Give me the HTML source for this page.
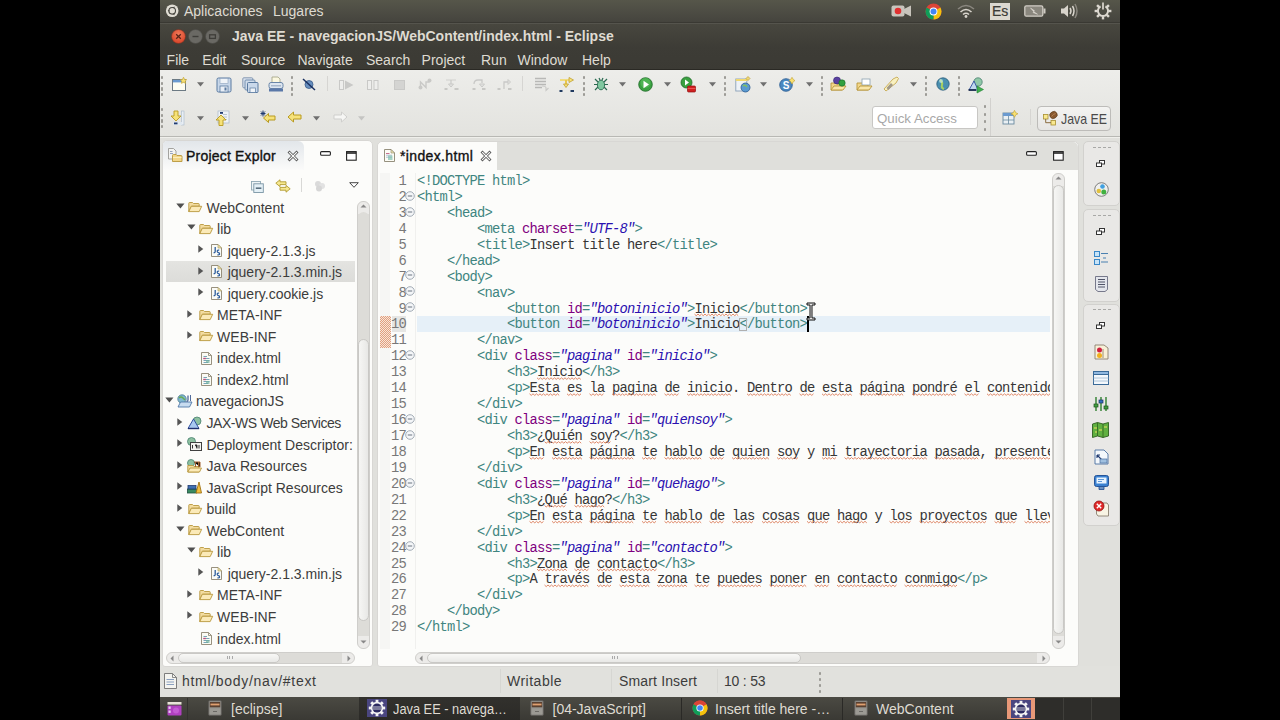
<!DOCTYPE html><html><head><meta charset="utf-8"><title>Eclipse</title><style>
*{margin:0;padding:0;box-sizing:border-box}
html,body{width:1280px;height:720px;overflow:hidden;background:#000}
body{position:relative;font-family:"Liberation Sans",sans-serif}
.a{position:absolute}
.t{position:absolute;white-space:nowrap;line-height:1}
svg{position:absolute;overflow:visible}
.code{position:absolute;left:417px;font-family:"Liberation Mono",monospace;font-size:13.8px;letter-spacing:-0.78px;line-height:15.9375px;white-space:pre;color:#363636}
.ln{position:absolute;font-family:"Liberation Mono",monospace;font-size:13.8px;letter-spacing:-0.78px;line-height:15.9375px;white-space:pre;color:#787878;text-align:right;width:40px;left:366px}
.tg{color:#3f8580}.an{color:#7f007f}.av{color:#2a10b0;font-style:italic}
.sq{}
.tr{position:absolute;white-space:nowrap;font-size:14px;line-height:21px;color:#3c3c3c}
</style></head><body>
<div class="a" style="left:160px;top:0;width:960px;height:720px;background:#e1e1dd"></div>
<div class="a" style="left:160px;top:0;width:960px;height:22px;background:linear-gradient(#56564a,#45443e)"></div>
<div class="a" style="left:160px;top:22px;width:960px;height:1px;background:#3a3933"></div><div class="a" style="left:160px;top:23px;width:960px;height:1px;background:#55544d"></div>
<div class="t" style="left:184px;top:4px;font-size:14px;color:#dfdbd2">Aplicaciones</div>
<div class="t" style="left:273px;top:4px;font-size:14px;color:#dfdbd2">Lugares</div>
<svg style="left:165px;top:4px" width="14" height="14" viewBox="0 0 14 14"><circle cx="7.2" cy="6.8" r="6.3" fill="#e0ddd4"/><circle cx="7.2" cy="6.8" r="3.3" fill="none" stroke="#45443e" stroke-width="1.1"/><path d="M2.6 6.8L4.4 5.8V7.8Z M9.6 2.4L9.3 4.5L7.7 3.4Z M9.6 11.2L7.7 10.2L9.3 9.1Z" fill="#45443e"/></svg>
<div class="a" style="left:160px;top:24px;width:960px;height:46px;background:linear-gradient(#48473f,#3d3c36 50%,#3b3a34)"></div>
<svg style="left:171px;top:29px" width="15" height="15"><defs><radialGradient id="rc" cx="0.5" cy="0.35" r="0.6"><stop offset="0" stop-color="#f07a5a"/><stop offset="1" stop-color="#d9472b"/></radialGradient></defs><circle cx="7.5" cy="7.5" r="7" fill="url(#rc)" stroke="#6e3024" stroke-width="0.6"/><path d="M5.2 5.2L9.8 9.8M9.8 5.2L5.2 9.8" stroke="#5a2418" stroke-width="1.3"/></svg>
<svg style="left:188px;top:29px" width="15" height="15"><circle cx="7.5" cy="7.5" r="7" fill="#6a6964" stroke="#4a4945" stroke-width="0.6"/><path d="M4.5 7.5H10.5" stroke="#3e3d39" stroke-width="1.4"/></svg>
<svg style="left:205px;top:29px" width="15" height="15"><circle cx="7.5" cy="7.5" r="7" fill="#6a6964" stroke="#4a4945" stroke-width="0.6"/><rect x="4.6" y="5.8" width="5.8" height="3.6" fill="none" stroke="#3e3d39" stroke-width="1.3"/></svg>
<div class="t" style="left:232px;top:29px;font-size:14px;font-weight:bold;color:#dfdbd2">Java EE - navegacionJS/WebContent/index.html - Eclipse</div>
<div class="t" style="left:166.6px;top:53px;font-size:14px;color:#dfdbd2">File</div>
<div class="t" style="left:202.3px;top:53px;font-size:14px;color:#dfdbd2">Edit</div>
<div class="t" style="left:241.0px;top:53px;font-size:14px;color:#dfdbd2">Source</div>
<div class="t" style="left:297.5px;top:53px;font-size:14px;color:#dfdbd2">Navigate</div>
<div class="t" style="left:366.0px;top:53px;font-size:14px;color:#dfdbd2">Search</div>
<div class="t" style="left:421.6px;top:53px;font-size:14px;color:#dfdbd2">Project</div>
<div class="t" style="left:481.0px;top:53px;font-size:14px;color:#dfdbd2">Run</div>
<div class="t" style="left:517.5px;top:53px;font-size:14px;color:#dfdbd2">Window</div>
<div class="t" style="left:582.0px;top:53px;font-size:14px;color:#dfdbd2">Help</div>
<div class="a" style="left:160px;top:69px;width:960px;height:1px;background:#2a2924"></div>
<div class="a" style="left:160px;top:70px;width:960px;height:66px;background:linear-gradient(#ededea,#e3e3df)"></div>
<div class="a" style="left:160px;top:136px;width:960px;height:1px;background:#b8b8b4"></div><div class="a" style="left:160px;top:137px;width:960px;height:1px;background:#efefeb"></div>
<div class="a" style="left:161px;top:76.0px;width:1.7px;height:3.4px;background:#9c9b96;border-radius:0.8px"></div>
<div class="a" style="left:161px;top:81.7px;width:1.7px;height:3.4px;background:#9c9b96;border-radius:0.8px"></div>
<div class="a" style="left:161px;top:87.4px;width:1.7px;height:3.4px;background:#9c9b96;border-radius:0.8px"></div>
<div class="a" style="left:161px;top:93.1px;width:1.7px;height:3.4px;background:#9c9b96;border-radius:0.8px"></div>
<div class="a" style="left:161px;top:108.0px;width:1.7px;height:3.4px;background:#9c9b96;border-radius:0.8px"></div>
<div class="a" style="left:161px;top:113.7px;width:1.7px;height:3.4px;background:#9c9b96;border-radius:0.8px"></div>
<div class="a" style="left:161px;top:119.4px;width:1.7px;height:3.4px;background:#9c9b96;border-radius:0.8px"></div>
<div class="a" style="left:161px;top:125.1px;width:1.7px;height:3.4px;background:#9c9b96;border-radius:0.8px"></div>
<svg style="left:171px;top:77px" width="16" height="15" viewBox="0 0 16 15"><rect x="1.5" y="2.5" width="13" height="11" fill="#fdfdf2" stroke="#6c7a84" stroke-width="1"/><rect x="2" y="3" width="12" height="2.4" fill="#6a9ad0"/><path d="M12.5 0.2L13.6 2.4L15.8 2.6L14.2 4.2L14.6 6.4L12.5 5.3L10.4 6.4L10.8 4.2L9.2 2.6L11.4 2.4Z" fill="#f8e070" stroke="#c0a030" stroke-width="0.6"/></svg>
<svg style="left:197px;top:82px" width="7" height="5" viewBox="0 0 7 5"><path d="M0 0.2H7L3.5 4.6Z" fill="#6f6f6f"/></svg>
<svg style="left:216px;top:77px" width="16" height="16" viewBox="0 0 16 16"><rect x="1" y="1" width="14" height="14" rx="1.5" fill="#c9d8ea" stroke="#5a7aa0" stroke-width="1"/><rect x="4" y="1.5" width="8" height="5" fill="#f0f4f8" stroke="#8aa0bc" stroke-width="0.6"/><rect x="4" y="9" width="8" height="6" fill="#e8eef6" stroke="#5a7aa0" stroke-width="0.8"/><rect x="8.5" y="10.5" width="2" height="3" fill="#5a7aa0"/></svg>
<svg style="left:242px;top:77px" width="17" height="16" viewBox="0 0 17 16"><rect x="0.8" y="0.8" width="10" height="10" rx="1" fill="#d8e2ee" stroke="#7a90ac" stroke-width="0.9"/><rect x="3" y="3" width="10" height="10" rx="1" fill="#d0dcea" stroke="#6a86a8" stroke-width="0.9"/><rect x="5.5" y="5.5" width="10.5" height="10" rx="1" fill="#c9d8ea" stroke="#5a7aa0" stroke-width="1"/><rect x="8" y="11" width="5.5" height="4.5" fill="#f0f4f8" stroke="#5a7aa0" stroke-width="0.7"/></svg>
<svg style="left:268px;top:76px" width="16" height="17" viewBox="0 0 16 17"><path d="M4 1H10L12 3V7H4Z" fill="#fbf8e0" stroke="#a0a080" stroke-width="0.8"/><rect x="1" y="6.5" width="14" height="6" rx="2" fill="#dde6f0" stroke="#6a86a8" stroke-width="1"/><rect x="1" y="12.5" width="14" height="3" fill="#5a78a8"/><rect x="3" y="9" width="10" height="1.5" fill="#a8b8cc"/></svg>
<div class="a" style="left:291px;top:76.0px;width:1.7px;height:3.4px;background:#9c9b96;border-radius:0.8px"></div>
<div class="a" style="left:291px;top:81.7px;width:1.7px;height:3.4px;background:#9c9b96;border-radius:0.8px"></div>
<div class="a" style="left:291px;top:87.4px;width:1.7px;height:3.4px;background:#9c9b96;border-radius:0.8px"></div>
<div class="a" style="left:291px;top:93.1px;width:1.7px;height:3.4px;background:#9c9b96;border-radius:0.8px"></div>
<svg style="left:302px;top:78px" width="14" height="13" viewBox="0 0 14 13"><circle cx="7" cy="6.5" r="4" fill="#6890c0" stroke="#3a5a88" stroke-width="0.8"/><path d="M1 1L13 12" stroke="#1a3060" stroke-width="1.5"/></svg>
<div class="a" style="left:327px;top:76px;width:1px;height:15px;background:#d6d5d2"></div>
<svg style="left:339px;top:80px" width="15" height="10" viewBox="0 0 15 10"><rect x="0.5" y="0.5" width="4" height="9" fill="#eeeeec" stroke="#c9c9c7" stroke-width="1"/><path d="M6 0.5L14.5 5L6 9.5Z" fill="#c9c9c7"/></svg>
<svg style="left:367px;top:80px" width="12" height="10" viewBox="0 0 12 10"><rect x="0.5" y="0.5" width="4" height="9" fill="#eeeeec" stroke="#c9c9c7" stroke-width="1"/><rect x="7" y="0.5" width="4" height="9" fill="#eeeeec" stroke="#c9c9c7" stroke-width="1"/></svg>
<svg style="left:394px;top:80px" width="11" height="10" viewBox="0 0 11 10"><rect x="0.5" y="0.5" width="10" height="9" fill="#d4d4d2" stroke="#c9c9c7" stroke-width="1"/></svg>
<svg style="left:418px;top:78px" width="14" height="12" viewBox="0 0 14 12"><circle cx="2.5" cy="9.5" r="2" fill="#c9c9c7"/><circle cx="11.5" cy="2.5" r="2" fill="#c9c9c7"/><path d="M2.5 9.5V4L8 9.5V4H11.5" stroke="#c9c9c7" stroke-width="1.4" fill="none"/></svg>
<svg style="left:444px;top:79px" width="15" height="11" viewBox="0 0 15 11"><path d="M2 1H12" stroke="#d8d8d6" stroke-width="1.4"/><path d="M7 1V5" stroke="#c9c9c7" stroke-width="1.2"/><path d="M4.5 5H9.5L7 8Z" fill="#e4e4e2" stroke="#c9c9c7" stroke-width="1"/><path d="M0.5 10H3.5M10.5 10H14.5" stroke="#bdbdbb" stroke-width="1.6"/></svg>
<svg style="left:471px;top:79px" width="15" height="11" viewBox="0 0 15 11"><path d="M3 5Q3 1 7 1H11V4" stroke="#c9c9c7" stroke-width="1.3" fill="none"/><path d="M8.5 5H13.5L11 8Z" fill="#e4e4e2" stroke="#c9c9c7" stroke-width="1"/><path d="M1.5 10H4.5M11 10H14.5" stroke="#bdbdbb" stroke-width="1.6"/></svg>
<svg style="left:497px;top:79px" width="15" height="11" viewBox="0 0 15 11"><path d="M7 10V3H11" stroke="#c9c9c7" stroke-width="1.3" fill="none"/><path d="M11 0.5L13.5 3L11 5.5Z" fill="#e4e4e2" stroke="#c9c9c7" stroke-width="1"/><path d="M0.5 10H3.5M11 10H14.5" stroke="#bdbdbb" stroke-width="1.6"/></svg>
<div class="a" style="left:522px;top:76px;width:1px;height:15px;background:#d6d5d2"></div>
<svg style="left:534px;top:77px" width="15" height="15" viewBox="0 0 15 15"><path d="M1 1.5H12M1 4.5H12M1 7.5H12M1 10.5H8" stroke="#b8b8b6" stroke-width="1.6"/><path d="M8 9Q12 9 12 11V13.5L14.5 11" stroke="#c8c8c6" stroke-width="1.1" fill="none"/></svg>
<svg style="left:559px;top:77px" width="16" height="15" viewBox="0 0 16 15"><path d="M1 3H11" stroke="#f0dc80" stroke-width="2"/><path d="M10 0.5L14.5 3L10 5.5Z" fill="#f6e27a" stroke="#c0a030" stroke-width="0.8"/><path d="M7 3V7" stroke="#e8c850" stroke-width="2"/><path d="M4.5 7H9.5L7 10.5Z" fill="#f6e27a" stroke="#c0a030" stroke-width="0.8"/><path d="M0.5 14H3.5M11.5 14H15" stroke="#203a60" stroke-width="2"/></svg>
<div class="a" style="left:583px;top:76.0px;width:1.7px;height:3.4px;background:#9c9b96;border-radius:0.8px"></div>
<div class="a" style="left:583px;top:81.7px;width:1.7px;height:3.4px;background:#9c9b96;border-radius:0.8px"></div>
<div class="a" style="left:583px;top:87.4px;width:1.7px;height:3.4px;background:#9c9b96;border-radius:0.8px"></div>
<div class="a" style="left:583px;top:93.1px;width:1.7px;height:3.4px;background:#9c9b96;border-radius:0.8px"></div>
<svg style="left:593px;top:76px" width="16" height="16" viewBox="0 0 16 16"><path d="M2 3L5 6M14 3L11 6M1 8.5H4.5M15 8.5H11.5M2 14L5 11M14 14L11 11M6 2L7 4M10 2L9 4" stroke="#2a6a50" stroke-width="1.2"/><ellipse cx="8" cy="9" rx="3.6" ry="4.8" fill="#80c8a0" stroke="#2a6a50" stroke-width="0.9"/></svg>
<svg style="left:619px;top:82px" width="7" height="5" viewBox="0 0 7 5"><path d="M0 0.2H7L3.5 4.6Z" fill="#6f6f6f"/></svg>
<svg style="left:638px;top:77px" width="15" height="15" viewBox="0 0 15 15"><circle cx="7.5" cy="7.5" r="6.8" fill="#3aa040" stroke="#1e6a28" stroke-width="0.8"/><circle cx="7.5" cy="6" r="5" fill="#5cc060" opacity="0.6"/><path d="M5.5 3.8L11 7.5L5.5 11.2Z" fill="#fff"/></svg>
<svg style="left:664px;top:82px" width="7" height="5" viewBox="0 0 7 5"><path d="M0 0.2H7L3.5 4.6Z" fill="#6f6f6f"/></svg>
<svg style="left:680px;top:76px" width="16" height="17" viewBox="0 0 16 17"><circle cx="6.5" cy="6.5" r="5.5" fill="#3aa040" stroke="#1e6a28" stroke-width="0.8"/><path d="M5 3.5L9 6.5L5 9.5Z" fill="#fff"/><rect x="7.5" y="10" width="8" height="6" rx="1" fill="#d02020" stroke="#901010" stroke-width="0.7"/><path d="M7.5 12.5H15.5" stroke="#f06060" stroke-width="0.8"/></svg>
<svg style="left:709px;top:82px" width="7" height="5" viewBox="0 0 7 5"><path d="M0 0.2H7L3.5 4.6Z" fill="#6f6f6f"/></svg>
<div class="a" style="left:724px;top:76.0px;width:1.7px;height:3.4px;background:#9c9b96;border-radius:0.8px"></div>
<div class="a" style="left:724px;top:81.7px;width:1.7px;height:3.4px;background:#9c9b96;border-radius:0.8px"></div>
<div class="a" style="left:724px;top:87.4px;width:1.7px;height:3.4px;background:#9c9b96;border-radius:0.8px"></div>
<div class="a" style="left:724px;top:93.1px;width:1.7px;height:3.4px;background:#9c9b96;border-radius:0.8px"></div>
<svg style="left:735px;top:76px" width="16" height="17" viewBox="0 0 16 17"><rect x="0.8" y="3" width="11" height="12" fill="#eef2f6" stroke="#8aa0b8" stroke-width="0.9"/><path d="M0.8 4H12" stroke="#f0d870" stroke-width="2"/><circle cx="10.5" cy="11.5" r="4.5" fill="#5a9ad0" stroke="#2a5a90" stroke-width="0.8"/><path d="M8 10Q10 8 12 11" stroke="#80c060" stroke-width="1.5" fill="none"/><path d="M13 0.5L15 2.5L13 4.5L11 2.5Z" fill="#f0d870" stroke="#b09020" stroke-width="0.6"/></svg>
<svg style="left:760px;top:82px" width="7" height="5" viewBox="0 0 7 5"><path d="M0 0.2H7L3.5 4.6Z" fill="#6f6f6f"/></svg>
<svg style="left:779px;top:77px" width="16" height="15" viewBox="0 0 16 15"><circle cx="7" cy="8" r="6.3" fill="#4a88c0" stroke="#2a5a90" stroke-width="0.8"/><text x="7" y="12" font-family="Liberation Sans" font-weight="bold" font-size="10" fill="#fff" text-anchor="middle">S</text><path d="M13 0.3L14.4 2.6L16 3.6L14.4 4.6L13 7L11.6 4.6L10 3.6L11.6 2.6Z" fill="#f8e070" stroke="#c0a030" stroke-width="0.6"/></svg>
<svg style="left:806px;top:82px" width="7" height="5" viewBox="0 0 7 5"><path d="M0 0.2H7L3.5 4.6Z" fill="#6f6f6f"/></svg>
<div class="a" style="left:821px;top:76.0px;width:1.7px;height:3.4px;background:#9c9b96;border-radius:0.8px"></div>
<div class="a" style="left:821px;top:81.7px;width:1.7px;height:3.4px;background:#9c9b96;border-radius:0.8px"></div>
<div class="a" style="left:821px;top:87.4px;width:1.7px;height:3.4px;background:#9c9b96;border-radius:0.8px"></div>
<div class="a" style="left:821px;top:93.1px;width:1.7px;height:3.4px;background:#9c9b96;border-radius:0.8px"></div>
<svg style="left:830px;top:76px" width="17" height="16" viewBox="0 0 17 16"><path d="M1 14V7H6L7 8H12V14Z" fill="#f2d68a" stroke="#b8963a" stroke-width="0.9"/><path d="M1 14L4 10H16L13 14Z" fill="#fae6a8" stroke="#b8963a" stroke-width="0.9"/><circle cx="7" cy="4.5" r="3.5" fill="#5a40a0" stroke="#302070" stroke-width="0.6"/><circle cx="12" cy="7" r="3.2" fill="#30a040" stroke="#1a6a28" stroke-width="0.6"/></svg>
<svg style="left:856px;top:76px" width="17" height="16" viewBox="0 0 17 16"><path d="M1 14V7H6L7 8H12V14Z" fill="#f2d68a" stroke="#b8963a" stroke-width="0.9"/><rect x="6" y="3" width="8" height="6" fill="#fff" stroke="#8aa0b0" stroke-width="0.8"/><path d="M1 14L4 10H16L13 14Z" fill="#fae6a8" stroke="#b8963a" stroke-width="0.9"/></svg>
<svg style="left:883px;top:76px" width="17" height="16" viewBox="0 0 17 16"><path d="M3 15L1 13L10 3L14 1L15.5 2.5L13 7Z" fill="#f8f0c0" stroke="#c0a040" stroke-width="0.8"/><path d="M3.5 12L8 7L10 9L5.5 14Z" fill="#a09888"/></svg>
<svg style="left:910px;top:82px" width="7" height="5" viewBox="0 0 7 5"><path d="M0 0.2H7L3.5 4.6Z" fill="#6f6f6f"/></svg>
<div class="a" style="left:925px;top:76.0px;width:1.7px;height:3.4px;background:#9c9b96;border-radius:0.8px"></div>
<div class="a" style="left:925px;top:81.7px;width:1.7px;height:3.4px;background:#9c9b96;border-radius:0.8px"></div>
<div class="a" style="left:925px;top:87.4px;width:1.7px;height:3.4px;background:#9c9b96;border-radius:0.8px"></div>
<div class="a" style="left:925px;top:93.1px;width:1.7px;height:3.4px;background:#9c9b96;border-radius:0.8px"></div>
<svg style="left:936px;top:77px" width="14" height="14" viewBox="0 0 14 14"><circle cx="7" cy="7" r="6.2" fill="#4a90b0" stroke="#2a5a78" stroke-width="0.8"/><path d="M4 3Q7 5 6 8T8 12" stroke="#a8d060" stroke-width="2" fill="none"/><circle cx="5" cy="4" r="2" fill="#d0f0f0" opacity="0.6"/></svg>
<div class="a" style="left:958px;top:76.0px;width:1.7px;height:3.4px;background:#9c9b96;border-radius:0.8px"></div>
<div class="a" style="left:958px;top:81.7px;width:1.7px;height:3.4px;background:#9c9b96;border-radius:0.8px"></div>
<div class="a" style="left:958px;top:87.4px;width:1.7px;height:3.4px;background:#9c9b96;border-radius:0.8px"></div>
<div class="a" style="left:958px;top:93.1px;width:1.7px;height:3.4px;background:#9c9b96;border-radius:0.8px"></div>
<svg style="left:968px;top:77px" width="16" height="16" viewBox="0 0 16 16"><circle cx="10" cy="5" r="4.2" fill="#90c8a8" stroke="#4a8070" stroke-width="0.8"/><path d="M1 13L6 4L10 13Z" fill="#c0d8f0" stroke="#3050a0" stroke-width="0.9"/><path d="M0.5 13H8" stroke="#102040" stroke-width="1.6"/><path d="M9 9L15.5 12.5L9 16Z" fill="#40b050" stroke="#208030" stroke-width="0.6"/></svg>
<svg style="left:170px;top:110px" width="15" height="16" viewBox="0 0 15 16"><path d="M4 1H8V6H11L6 11L1 6H4Z" fill="#f6e27a" stroke="#b89a20" stroke-width="0.9"/><rect x="11.5" y="1" width="2.5" height="14" fill="#e8eef4" stroke="#a8b8c8" stroke-width="0.6"/><rect x="3" y="12" width="9" height="3" fill="#e0e8f0"/><rect x="4" y="12.5" width="3.5" height="1.8" fill="#203a70"/></svg>
<svg style="left:197px;top:116px" width="7" height="5" viewBox="0 0 7 5"><path d="M0 0.2H7L3.5 4.6Z" fill="#6f6f6f"/></svg>
<svg style="left:215px;top:110px" width="15" height="16" viewBox="0 0 15 16"><rect x="3" y="1" width="11" height="12" fill="#eef2f6" stroke="#a8b8c8" stroke-width="0.7"/><rect x="5" y="2" width="3" height="1.8" fill="#203a70"/><path d="M8 4.5H12M8 7H12M8 9.5H12" stroke="#a8b8c8" stroke-width="0.8"/><path d="M4 15.5V10H1L6 5L11 10H8V15.5Z" fill="#f6e27a" stroke="#b89a20" stroke-width="0.9"/></svg>
<svg style="left:242px;top:116px" width="7" height="5" viewBox="0 0 7 5"><path d="M0 0.2H7L3.5 4.6Z" fill="#6f6f6f"/></svg>
<svg style="left:260px;top:110px" width="17" height="15" viewBox="0 0 17 15"><path d="M1 1.5L5 5.5M3 0.5V6.5M0.5 3.5H5.5M1 5.5L5 1.5" stroke="#203a70" stroke-width="1"/><path d="M3.5 8L8.5 3.5V6H15V10H8.5V12.5Z" fill="#f6e27a" stroke="#b89a20" stroke-width="1"/></svg>
<svg style="left:287px;top:110px" width="15" height="14" viewBox="0 0 15 14"><path d="M1 7L6.5 2V5H14V9H6.5V12Z" fill="#f6e27a" stroke="#b89a20" stroke-width="1"/></svg>
<svg style="left:313px;top:116px" width="7" height="5" viewBox="0 0 7 5"><path d="M0 0.2H7L3.5 4.6Z" fill="#6f6f6f"/></svg>
<svg style="left:333px;top:110px" width="15" height="14" viewBox="0 0 15 14"><path d="M14 7L8.5 2V5H1V9H8.5V12Z" fill="#f6f6f4" stroke="#cfcfcd" stroke-width="1"/></svg>
<svg style="left:358px;top:116px" width="7" height="5" viewBox="0 0 7 5"><path d="M0 0.2H7L3.5 4.6Z" fill="#c4c4c2"/></svg>
<div class="a" style="left:872px;top:106px;width:106px;height:23px;background:#fff;border:1px solid #c8c7c4;border-radius:3px"></div>
<div class="t" style="left:877px;top:112px;font-size:13.3px;color:#a8a8a8">Quick Access</div>
<div class="a" style="left:984px;top:105.0px;width:1.7px;height:3.4px;background:#9c9b96;border-radius:0.8px"></div>
<div class="a" style="left:984px;top:112.5px;width:1.7px;height:3.4px;background:#9c9b96;border-radius:0.8px"></div>
<div class="a" style="left:984px;top:120.0px;width:1.7px;height:3.4px;background:#9c9b96;border-radius:0.8px"></div>
<div class="a" style="left:984px;top:127.5px;width:1.7px;height:3.4px;background:#9c9b96;border-radius:0.8px"></div>
<div class="a" style="left:990px;top:98px;width:1px;height:38px;background:#d2d1ce"></div>
<svg style="left:1002px;top:110px" width="16" height="16" viewBox="0 0 16 16"><rect x="1" y="3" width="11" height="11" fill="#eaf0f4" stroke="#6a8aa0" stroke-width="0.9"/><rect x="1" y="3" width="11" height="3" fill="#6a9ad0"/><path d="M6.5 6V14M1 10H12" stroke="#6a8aa0" stroke-width="0.8"/><path d="M12.5 0.3L13.8 2.8L16 3.8L13.8 4.8L12.5 7.3L11.2 4.8L9 3.8L11.2 2.8Z" fill="#f8e070" stroke="#c0a030" stroke-width="0.6"/></svg>
<div class="a" style="left:1030px;top:109px;width:1px;height:16px;background:#d6d5d2"></div>
<div class="a" style="left:1037px;top:106px;width:74px;height:25px;background:linear-gradient(#f4f4f2,#e6e5e3);border:1px solid #bdbcb9;border-radius:4px"></div>
<svg style="left:1043px;top:111px" width="15" height="15" viewBox="0 0 15 15"><rect x="0.5" y="3.5" width="4.5" height="4.5" fill="#f8e890" stroke="#a89030" stroke-width="0.8"/><rect x="8" y="9.5" width="4.5" height="4.5" fill="#f8e890" stroke="#a89030" stroke-width="0.8"/><path d="M2.7 8V11.7H8" stroke="#806030" stroke-width="0.9" fill="none"/><ellipse cx="10.5" cy="4" rx="3.8" ry="3.4" fill="#8a5a30" stroke="#5a3a18" stroke-width="0.6" transform="rotate(-30 10.5 4)"/><path d="M8.5 5.5Q10.5 3 12.5 2.5" stroke="#c09060" stroke-width="0.7" fill="none"/></svg>
<div class="t" style="left:1061px;top:112px;font-size:14.5px;color:#4a4a4a;transform:scaleX(0.85);transform-origin:0 0">Java EE</div>
<div class="a" style="left:160px;top:138px;width:960px;height:528px;background:#e0e0dc"></div>
<div class="a" style="left:162px;top:140px;width:211px;height:527px;background:#fcfcfa;border:1px solid #d8d7d4;border-radius:5px 5px 3px 3px"></div>
<div class="a" style="left:163px;top:141px;width:141px;height:29px;background:linear-gradient(#e2e6ea,#fbfbfa);border-radius:4px 6px 0 0"></div>
<div class="t" style="left:186px;top:149px;font-size:14px;letter-spacing:0.2px;color:#111;-webkit-text-stroke:0.35px #111">Project Explor</div>
<div class="a" style="left:377px;top:141px;width:702px;height:526px;background:#fcfcfa;border:1px solid #d8d7d4;border-radius:5px 5px 3px 3px"></div>
<div class="a" style="left:497px;top:142px;width:581px;height:28px;background:#dfdfdb;border-radius:0 5px 0 0"></div>
<div class="a" style="left:378px;top:142px;width:119px;height:28px;background:#fcfcfa;border-radius:5px 5px 0 0"></div>
<div class="a" style="left:380px;top:173px;width:10px;height:476px;background:#f6f6f4"></div>
<div class="a" style="left:415px;top:173px;width:1px;height:476px;background:#f0f0ee"></div>
<div class="t" style="left:400px;top:149px;font-size:14px;letter-spacing:0.35px;color:#111;-webkit-text-stroke:0.35px #111">*index.html</div>
<div class="a" style="left:417px;top:316px;width:633px;height:16px;background:#e6f0f8"></div>
<div class="a" style="left:392px;top:316px;width:14px;height:16px;background:#e6e6e4"></div>
<div class="a" style="left:380px;top:316px;width:11px;height:32px;background:repeating-conic-gradient(#e0a080 0 25%,#f8e4d8 0 50%) 0 0/2px 2px"></div>
<div class="a" style="left:417px;top:174px;width:633px;height:475px;overflow:hidden">
<div class="code" style="left:0;top:0px"><span class="tg">&lt;!DOCTYPE html&gt;</span>
<span class="tg">&lt;html&gt;</span>
    <span class="tg">&lt;head&gt;</span>
        <span class="tg">&lt;meta </span><span class="an">charset</span><span class="tg">=</span><span class="av">&quot;UTF-8&quot;</span><span class="tg">&gt;</span>
        <span class="tg">&lt;title&gt;</span>Insert title here<span class="tg">&lt;/title&gt;</span>
    <span class="tg">&lt;/head&gt;</span>
    <span class="tg">&lt;body&gt;</span>
        <span class="tg">&lt;nav&gt;</span>
            <span class="tg">&lt;button </span><span class="an">id</span><span class="tg">=</span><span class="av">&quot;botoninicio&quot;</span><span class="tg">&gt;</span><span class="sq">Inicio</span><span class="tg">&lt;/button&gt;</span>
            <span class="tg">&lt;button </span><span class="an">id</span><span class="tg">=</span><span class="av">&quot;botoninicio&quot;</span><span class="tg">&gt;</span>Inicio<span class="tg">&lt;/button&gt;</span>
        <span class="tg">&lt;/nav&gt;</span>
        <span class="tg">&lt;div </span><span class="an">class</span><span class="tg">=</span><span class="av">&quot;pagina&quot;</span> <span class="an">id</span><span class="tg">=</span><span class="av">&quot;inicio&quot;</span><span class="tg">&gt;</span>
            <span class="tg">&lt;h3&gt;</span><span class="sq">Inicio</span><span class="tg">&lt;/h3&gt;</span>
            <span class="tg">&lt;p&gt;</span><span class="sq">Esta</span> <span class="sq">es</span> <span class="sq">la</span> <span class="sq">pagina</span> <span class="sq">de</span> <span class="sq">inicio.</span> <span class="sq">Dentro</span> <span class="sq">de</span> <span class="sq">esta</span> <span class="sq">página</span> <span class="sq">pondré</span> <span class="sq">el</span> <span class="sq">contenido</span> <span class="sq">de</span> <span class="sq">mi</span> <span class="sq">pagina</span>
        <span class="tg">&lt;/div&gt;</span>
        <span class="tg">&lt;div </span><span class="an">class</span><span class="tg">=</span><span class="av">&quot;pagina&quot;</span> <span class="an">id</span><span class="tg">=</span><span class="av">&quot;quiensoy&quot;</span><span class="tg">&gt;</span>
            <span class="tg">&lt;h3&gt;</span><span class="sq">¿Quién</span> <span class="sq">soy?</span><span class="tg">&lt;/h3&gt;</span>
            <span class="tg">&lt;p&gt;</span><span class="sq">En</span> <span class="sq">esta</span> <span class="sq">página</span> <span class="sq">te</span> <span class="sq">hablo</span> <span class="sq">de</span> <span class="sq">quien</span> <span class="sq">soy</span> <span class="sq">y</span> <span class="sq">mi</span> <span class="sq">trayectoria</span> <span class="sq">pasada,</span> <span class="sq">presente</span> <span class="sq">y</span> <span class="sq">futura</span>
        <span class="tg">&lt;/div&gt;</span>
        <span class="tg">&lt;div </span><span class="an">class</span><span class="tg">=</span><span class="av">&quot;pagina&quot;</span> <span class="an">id</span><span class="tg">=</span><span class="av">&quot;quehago&quot;</span><span class="tg">&gt;</span>
            <span class="tg">&lt;h3&gt;</span><span class="sq">¿Qué</span> <span class="sq">hago?</span><span class="tg">&lt;/h3&gt;</span>
            <span class="tg">&lt;p&gt;</span><span class="sq">En</span> <span class="sq">esta</span> <span class="sq">página</span> <span class="sq">te</span> <span class="sq">hablo</span> <span class="sq">de</span> <span class="sq">las</span> <span class="sq">cosas</span> <span class="sq">que</span> <span class="sq">hago</span> <span class="sq">y</span> <span class="sq">los</span> <span class="sq">proyectos</span> <span class="sq">que</span> <span class="sq">llevo</span>
        <span class="tg">&lt;/div&gt;</span>
        <span class="tg">&lt;div </span><span class="an">class</span><span class="tg">=</span><span class="av">&quot;pagina&quot;</span> <span class="an">id</span><span class="tg">=</span><span class="av">&quot;contacto&quot;</span><span class="tg">&gt;</span>
            <span class="tg">&lt;h3&gt;</span><span class="sq">Zona</span> <span class="sq">de</span> <span class="sq">contacto</span><span class="tg">&lt;/h3&gt;</span>
            <span class="tg">&lt;p&gt;</span>A <span class="sq">través</span> <span class="sq">de</span> <span class="sq">esta</span> <span class="sq">zona</span> <span class="sq">te</span> <span class="sq">puedes</span> <span class="sq">poner</span> <span class="sq">en</span> <span class="sq">contacto</span> <span class="sq">conmigo</span><span class="tg">&lt;/p&gt;</span>
        <span class="tg">&lt;/div&gt;</span>
    <span class="tg">&lt;/body&gt;</span>
<span class="tg">&lt;/html&gt;</span></div>
<svg style="left:0;top:0" width="633" height="475"><polyline points="277.5,140.1 279.2,141.7 281.0,140.1 282.8,141.7 284.5,140.1 286.2,141.7 288.0,140.1 289.8,141.7 291.5,140.1 293.2,141.7 295.0,140.1 296.8,141.7 298.5,140.1 300.2,141.7 302.0,140.1 303.8,141.7 305.5,140.1 307.2,141.7 309.0,140.1 310.8,141.7 312.5,140.1 314.2,141.7 316.0,140.1 317.8,141.7 319.5,140.1 321.2,141.7" fill="none" stroke="#e08868" stroke-width="1"/><polyline points="120.0,203.8 121.8,205.4 123.5,203.8 125.2,205.4 127.0,203.8 128.8,205.4 130.5,203.8 132.2,205.4 134.0,203.8 135.8,205.4 137.5,203.8 139.2,205.4 141.0,203.8 142.8,205.4 144.5,203.8 146.2,205.4 148.0,203.8 149.8,205.4 151.5,203.8 153.2,205.4 155.0,203.8 156.8,205.4 158.5,203.8 160.2,205.4 162.0,203.8 163.8,205.4" fill="none" stroke="#e08868" stroke-width="1"/><polyline points="112.5,219.8 114.2,221.4 116.0,219.8 117.8,221.4 119.5,219.8 121.2,221.4 123.0,219.8 124.8,221.4 126.5,219.8 128.2,221.4 130.0,219.8 131.8,221.4 133.5,219.8 135.2,221.4 137.0,219.8 138.8,221.4 140.5,219.8 142.2,221.4" fill="none" stroke="#e08868" stroke-width="1"/><polyline points="150.0,219.8 151.8,221.4 153.5,219.8 155.2,221.4 157.0,219.8 158.8,221.4 160.5,219.8 162.2,221.4 164.0,219.8" fill="none" stroke="#e08868" stroke-width="1"/><polyline points="172.5,219.8 174.2,221.4 176.0,219.8 177.8,221.4 179.5,219.8 181.2,221.4 183.0,219.8 184.8,221.4 186.5,219.8" fill="none" stroke="#e08868" stroke-width="1"/><polyline points="195.0,219.8 196.8,221.4 198.5,219.8 200.2,221.4 202.0,219.8 203.8,221.4 205.5,219.8 207.2,221.4 209.0,219.8 210.8,221.4 212.5,219.8 214.2,221.4 216.0,219.8 217.8,221.4 219.5,219.8 221.2,221.4 223.0,219.8 224.8,221.4 226.5,219.8 228.2,221.4 230.0,219.8 231.8,221.4 233.5,219.8 235.2,221.4 237.0,219.8 238.8,221.4" fill="none" stroke="#e08868" stroke-width="1"/><polyline points="247.5,219.8 249.2,221.4 251.0,219.8 252.8,221.4 254.5,219.8 256.2,221.4 258.0,219.8 259.8,221.4 261.5,219.8" fill="none" stroke="#e08868" stroke-width="1"/><polyline points="270.0,219.8 271.8,221.4 273.5,219.8 275.2,221.4 277.0,219.8 278.8,221.4 280.5,219.8 282.2,221.4 284.0,219.8 285.8,221.4 287.5,219.8 289.2,221.4 291.0,219.8 292.8,221.4 294.5,219.8 296.2,221.4 298.0,219.8 299.8,221.4 301.5,219.8 303.2,221.4 305.0,219.8 306.8,221.4 308.5,219.8 310.2,221.4 312.0,219.8 313.8,221.4" fill="none" stroke="#e08868" stroke-width="1"/><polyline points="330.0,219.8 331.8,221.4 333.5,219.8 335.2,221.4 337.0,219.8 338.8,221.4 340.5,219.8 342.2,221.4 344.0,219.8 345.8,221.4 347.5,219.8 349.2,221.4 351.0,219.8 352.8,221.4 354.5,219.8 356.2,221.4 358.0,219.8 359.8,221.4 361.5,219.8 363.2,221.4 365.0,219.8 366.8,221.4 368.5,219.8 370.2,221.4 372.0,219.8 373.8,221.4" fill="none" stroke="#e08868" stroke-width="1"/><polyline points="382.5,219.8 384.2,221.4 386.0,219.8 387.8,221.4 389.5,219.8 391.2,221.4 393.0,219.8 394.8,221.4 396.5,219.8" fill="none" stroke="#e08868" stroke-width="1"/><polyline points="405.0,219.8 406.8,221.4 408.5,219.8 410.2,221.4 412.0,219.8 413.8,221.4 415.5,219.8 417.2,221.4 419.0,219.8 420.8,221.4 422.5,219.8 424.2,221.4 426.0,219.8 427.8,221.4 429.5,219.8 431.2,221.4 433.0,219.8 434.8,221.4" fill="none" stroke="#e08868" stroke-width="1"/><polyline points="442.5,219.8 444.2,221.4 446.0,219.8 447.8,221.4 449.5,219.8 451.2,221.4 453.0,219.8 454.8,221.4 456.5,219.8 458.2,221.4 460.0,219.8 461.8,221.4 463.5,219.8 465.2,221.4 467.0,219.8 468.8,221.4 470.5,219.8 472.2,221.4 474.0,219.8 475.8,221.4 477.5,219.8 479.2,221.4 481.0,219.8 482.8,221.4 484.5,219.8 486.2,221.4" fill="none" stroke="#e08868" stroke-width="1"/><polyline points="495.0,219.8 496.8,221.4 498.5,219.8 500.2,221.4 502.0,219.8 503.8,221.4 505.5,219.8 507.2,221.4 509.0,219.8 510.8,221.4 512.5,219.8 514.2,221.4 516.0,219.8 517.8,221.4 519.5,219.8 521.2,221.4 523.0,219.8 524.8,221.4 526.5,219.8 528.2,221.4 530.0,219.8 531.8,221.4 533.5,219.8 535.2,221.4 537.0,219.8 538.8,221.4" fill="none" stroke="#e08868" stroke-width="1"/><polyline points="547.5,219.8 549.2,221.4 551.0,219.8 552.8,221.4 554.5,219.8 556.2,221.4 558.0,219.8 559.8,221.4 561.5,219.8" fill="none" stroke="#e08868" stroke-width="1"/><polyline points="570.0,219.8 571.8,221.4 573.5,219.8 575.2,221.4 577.0,219.8 578.8,221.4 580.5,219.8 582.2,221.4 584.0,219.8 585.8,221.4 587.5,219.8 589.2,221.4 591.0,219.8 592.8,221.4 594.5,219.8 596.2,221.4 598.0,219.8 599.8,221.4 601.5,219.8 603.2,221.4 605.0,219.8 606.8,221.4 608.5,219.8 610.2,221.4 612.0,219.8 613.8,221.4 615.5,219.8 617.2,221.4 619.0,219.8 620.8,221.4 622.5,219.8 624.2,221.4 626.0,219.8 627.8,221.4 629.5,219.8 631.2,221.4 633.0,219.8 634.8,221.4 636.5,219.8" fill="none" stroke="#e08868" stroke-width="1"/><polyline points="645.0,219.8 646.8,221.4 648.5,219.8 650.2,221.4 652.0,219.8 653.8,221.4 655.5,219.8 657.2,221.4 659.0,219.8" fill="none" stroke="#e08868" stroke-width="1"/><polyline points="667.5,219.8 669.2,221.4 671.0,219.8 672.8,221.4 674.5,219.8 676.2,221.4 678.0,219.8 679.8,221.4 681.5,219.8" fill="none" stroke="#e08868" stroke-width="1"/><polyline points="690.0,219.8 691.8,221.4 693.5,219.8 695.2,221.4 697.0,219.8 698.8,221.4 700.5,219.8 702.2,221.4 704.0,219.8 705.8,221.4 707.5,219.8 709.2,221.4 711.0,219.8 712.8,221.4 714.5,219.8 716.2,221.4 718.0,219.8 719.8,221.4 721.5,219.8 723.2,221.4 725.0,219.8 726.8,221.4 728.5,219.8 730.2,221.4 732.0,219.8 733.8,221.4" fill="none" stroke="#e08868" stroke-width="1"/><polyline points="127.5,267.6 129.2,269.2 131.0,267.6 132.8,269.2 134.5,267.6 136.2,269.2 138.0,267.6 139.8,269.2 141.5,267.6 143.2,269.2 145.0,267.6 146.8,269.2 148.5,267.6 150.2,269.2 152.0,267.6 153.8,269.2 155.5,267.6 157.2,269.2 159.0,267.6 160.8,269.2 162.5,267.6 164.2,269.2" fill="none" stroke="#e08868" stroke-width="1"/><polyline points="172.5,267.6 174.2,269.2 176.0,267.6 177.8,269.2 179.5,267.6 181.2,269.2 183.0,267.6 184.8,269.2 186.5,267.6 188.2,269.2 190.0,267.6 191.8,269.2 193.5,267.6" fill="none" stroke="#e08868" stroke-width="1"/><polyline points="112.5,283.5 114.2,285.1 116.0,283.5 117.8,285.1 119.5,283.5 121.2,285.1 123.0,283.5 124.8,285.1 126.5,283.5" fill="none" stroke="#e08868" stroke-width="1"/><polyline points="135.0,283.5 136.8,285.1 138.5,283.5 140.2,285.1 142.0,283.5 143.8,285.1 145.5,283.5 147.2,285.1 149.0,283.5 150.8,285.1 152.5,283.5 154.2,285.1 156.0,283.5 157.8,285.1 159.5,283.5 161.2,285.1 163.0,283.5 164.8,285.1" fill="none" stroke="#e08868" stroke-width="1"/><polyline points="172.5,283.5 174.2,285.1 176.0,283.5 177.8,285.1 179.5,283.5 181.2,285.1 183.0,283.5 184.8,285.1 186.5,283.5 188.2,285.1 190.0,283.5 191.8,285.1 193.5,283.5 195.2,285.1 197.0,283.5 198.8,285.1 200.5,283.5 202.2,285.1 204.0,283.5 205.8,285.1 207.5,283.5 209.2,285.1 211.0,283.5 212.8,285.1 214.5,283.5 216.2,285.1" fill="none" stroke="#e08868" stroke-width="1"/><polyline points="225.0,283.5 226.8,285.1 228.5,283.5 230.2,285.1 232.0,283.5 233.8,285.1 235.5,283.5 237.2,285.1 239.0,283.5" fill="none" stroke="#e08868" stroke-width="1"/><polyline points="247.5,283.5 249.2,285.1 251.0,283.5 252.8,285.1 254.5,283.5 256.2,285.1 258.0,283.5 259.8,285.1 261.5,283.5 263.2,285.1 265.0,283.5 266.8,285.1 268.5,283.5 270.2,285.1 272.0,283.5 273.8,285.1 275.5,283.5 277.2,285.1 279.0,283.5 280.8,285.1 282.5,283.5 284.2,285.1" fill="none" stroke="#e08868" stroke-width="1"/><polyline points="292.5,283.5 294.2,285.1 296.0,283.5 297.8,285.1 299.5,283.5 301.2,285.1 303.0,283.5 304.8,285.1 306.5,283.5" fill="none" stroke="#e08868" stroke-width="1"/><polyline points="315.0,283.5 316.8,285.1 318.5,283.5 320.2,285.1 322.0,283.5 323.8,285.1 325.5,283.5 327.2,285.1 329.0,283.5 330.8,285.1 332.5,283.5 334.2,285.1 336.0,283.5 337.8,285.1 339.5,283.5 341.2,285.1 343.0,283.5 344.8,285.1 346.5,283.5 348.2,285.1 350.0,283.5 351.8,285.1" fill="none" stroke="#e08868" stroke-width="1"/><polyline points="360.0,283.5 361.8,285.1 363.5,283.5 365.2,285.1 367.0,283.5 368.8,285.1 370.5,283.5 372.2,285.1 374.0,283.5 375.8,285.1 377.5,283.5 379.2,285.1 381.0,283.5" fill="none" stroke="#e08868" stroke-width="1"/><polyline points="405.0,283.5 406.8,285.1 408.5,283.5 410.2,285.1 412.0,283.5 413.8,285.1 415.5,283.5 417.2,285.1 419.0,283.5" fill="none" stroke="#e08868" stroke-width="1"/><polyline points="427.5,283.5 429.2,285.1 431.0,283.5 432.8,285.1 434.5,283.5 436.2,285.1 438.0,283.5 439.8,285.1 441.5,283.5 443.2,285.1 445.0,283.5 446.8,285.1 448.5,283.5 450.2,285.1 452.0,283.5 453.8,285.1 455.5,283.5 457.2,285.1 459.0,283.5 460.8,285.1 462.5,283.5 464.2,285.1 466.0,283.5 467.8,285.1 469.5,283.5 471.2,285.1 473.0,283.5 474.8,285.1 476.5,283.5 478.2,285.1 480.0,283.5 481.8,285.1 483.5,283.5 485.2,285.1 487.0,283.5 488.8,285.1 490.5,283.5 492.2,285.1 494.0,283.5 495.8,285.1 497.5,283.5 499.2,285.1 501.0,283.5 502.8,285.1 504.5,283.5 506.2,285.1 508.0,283.5 509.8,285.1" fill="none" stroke="#e08868" stroke-width="1"/><polyline points="517.5,283.5 519.2,285.1 521.0,283.5 522.8,285.1 524.5,283.5 526.2,285.1 528.0,283.5 529.8,285.1 531.5,283.5 533.2,285.1 535.0,283.5 536.8,285.1 538.5,283.5 540.2,285.1 542.0,283.5 543.8,285.1 545.5,283.5 547.2,285.1 549.0,283.5 550.8,285.1 552.5,283.5 554.2,285.1 556.0,283.5 557.8,285.1 559.5,283.5 561.2,285.1" fill="none" stroke="#e08868" stroke-width="1"/><polyline points="577.5,283.5 579.2,285.1 581.0,283.5 582.8,285.1 584.5,283.5 586.2,285.1 588.0,283.5 589.8,285.1 591.5,283.5 593.2,285.1 595.0,283.5 596.8,285.1 598.5,283.5 600.2,285.1 602.0,283.5 603.8,285.1 605.5,283.5 607.2,285.1 609.0,283.5 610.8,285.1 612.5,283.5 614.2,285.1 616.0,283.5 617.8,285.1 619.5,283.5 621.2,285.1 623.0,283.5 624.8,285.1 626.5,283.5 628.2,285.1 630.0,283.5 631.8,285.1 633.5,283.5 635.2,285.1 637.0,283.5" fill="none" stroke="#e08868" stroke-width="1"/><polyline points="660.0,283.5 661.8,285.1 663.5,283.5 665.2,285.1 667.0,283.5 668.8,285.1 670.5,283.5 672.2,285.1 674.0,283.5 675.8,285.1 677.5,283.5 679.2,285.1 681.0,283.5 682.8,285.1 684.5,283.5 686.2,285.1 688.0,283.5 689.8,285.1 691.5,283.5 693.2,285.1 695.0,283.5 696.8,285.1 698.5,283.5 700.2,285.1 702.0,283.5 703.8,285.1" fill="none" stroke="#e08868" stroke-width="1"/><polyline points="127.5,331.4 129.2,333.0 131.0,331.4 132.8,333.0 134.5,331.4 136.2,333.0 138.0,331.4 139.8,333.0 141.5,331.4 143.2,333.0 145.0,331.4 146.8,333.0 148.5,331.4" fill="none" stroke="#e08868" stroke-width="1"/><polyline points="157.5,331.4 159.2,333.0 161.0,331.4 162.8,333.0 164.5,331.4 166.2,333.0 168.0,331.4 169.8,333.0 171.5,331.4 173.2,333.0 175.0,331.4 176.8,333.0 178.5,331.4 180.2,333.0 182.0,331.4 183.8,333.0 185.5,331.4 187.2,333.0" fill="none" stroke="#e08868" stroke-width="1"/><polyline points="112.5,347.3 114.2,348.9 116.0,347.3 117.8,348.9 119.5,347.3 121.2,348.9 123.0,347.3 124.8,348.9 126.5,347.3" fill="none" stroke="#e08868" stroke-width="1"/><polyline points="135.0,347.3 136.8,348.9 138.5,347.3 140.2,348.9 142.0,347.3 143.8,348.9 145.5,347.3 147.2,348.9 149.0,347.3 150.8,348.9 152.5,347.3 154.2,348.9 156.0,347.3 157.8,348.9 159.5,347.3 161.2,348.9 163.0,347.3 164.8,348.9" fill="none" stroke="#e08868" stroke-width="1"/><polyline points="172.5,347.3 174.2,348.9 176.0,347.3 177.8,348.9 179.5,347.3 181.2,348.9 183.0,347.3 184.8,348.9 186.5,347.3 188.2,348.9 190.0,347.3 191.8,348.9 193.5,347.3 195.2,348.9 197.0,347.3 198.8,348.9 200.5,347.3 202.2,348.9 204.0,347.3 205.8,348.9 207.5,347.3 209.2,348.9 211.0,347.3 212.8,348.9 214.5,347.3 216.2,348.9" fill="none" stroke="#e08868" stroke-width="1"/><polyline points="225.0,347.3 226.8,348.9 228.5,347.3 230.2,348.9 232.0,347.3 233.8,348.9 235.5,347.3 237.2,348.9 239.0,347.3" fill="none" stroke="#e08868" stroke-width="1"/><polyline points="247.5,347.3 249.2,348.9 251.0,347.3 252.8,348.9 254.5,347.3 256.2,348.9 258.0,347.3 259.8,348.9 261.5,347.3 263.2,348.9 265.0,347.3 266.8,348.9 268.5,347.3 270.2,348.9 272.0,347.3 273.8,348.9 275.5,347.3 277.2,348.9 279.0,347.3 280.8,348.9 282.5,347.3 284.2,348.9" fill="none" stroke="#e08868" stroke-width="1"/><polyline points="292.5,347.3 294.2,348.9 296.0,347.3 297.8,348.9 299.5,347.3 301.2,348.9 303.0,347.3 304.8,348.9 306.5,347.3" fill="none" stroke="#e08868" stroke-width="1"/><polyline points="315.0,347.3 316.8,348.9 318.5,347.3 320.2,348.9 322.0,347.3 323.8,348.9 325.5,347.3 327.2,348.9 329.0,347.3 330.8,348.9 332.5,347.3 334.2,348.9 336.0,347.3" fill="none" stroke="#e08868" stroke-width="1"/><polyline points="345.0,347.3 346.8,348.9 348.5,347.3 350.2,348.9 352.0,347.3 353.8,348.9 355.5,347.3 357.2,348.9 359.0,347.3 360.8,348.9 362.5,347.3 364.2,348.9 366.0,347.3 367.8,348.9 369.5,347.3 371.2,348.9 373.0,347.3 374.8,348.9 376.5,347.3 378.2,348.9 380.0,347.3 381.8,348.9" fill="none" stroke="#e08868" stroke-width="1"/><polyline points="390.0,347.3 391.8,348.9 393.5,347.3 395.2,348.9 397.0,347.3 398.8,348.9 400.5,347.3 402.2,348.9 404.0,347.3 405.8,348.9 407.5,347.3 409.2,348.9 411.0,347.3" fill="none" stroke="#e08868" stroke-width="1"/><polyline points="420.0,347.3 421.8,348.9 423.5,347.3 425.2,348.9 427.0,347.3 428.8,348.9 430.5,347.3 432.2,348.9 434.0,347.3 435.8,348.9 437.5,347.3 439.2,348.9 441.0,347.3 442.8,348.9 444.5,347.3 446.2,348.9 448.0,347.3 449.8,348.9" fill="none" stroke="#e08868" stroke-width="1"/><polyline points="472.5,347.3 474.2,348.9 476.0,347.3 477.8,348.9 479.5,347.3 481.2,348.9 483.0,347.3 484.8,348.9 486.5,347.3 488.2,348.9 490.0,347.3 491.8,348.9 493.5,347.3" fill="none" stroke="#e08868" stroke-width="1"/><polyline points="502.5,347.3 504.2,348.9 506.0,347.3 507.8,348.9 509.5,347.3 511.2,348.9 513.0,347.3 514.8,348.9 516.5,347.3 518.2,348.9 520.0,347.3 521.8,348.9 523.5,347.3 525.2,348.9 527.0,347.3 528.8,348.9 530.5,347.3 532.2,348.9 534.0,347.3 535.8,348.9 537.5,347.3 539.2,348.9 541.0,347.3 542.8,348.9 544.5,347.3 546.2,348.9 548.0,347.3 549.8,348.9 551.5,347.3 553.2,348.9 555.0,347.3 556.8,348.9 558.5,347.3 560.2,348.9 562.0,347.3 563.8,348.9 565.5,347.3 567.2,348.9 569.0,347.3" fill="none" stroke="#e08868" stroke-width="1"/><polyline points="577.5,347.3 579.2,348.9 581.0,347.3 582.8,348.9 584.5,347.3 586.2,348.9 588.0,347.3 589.8,348.9 591.5,347.3 593.2,348.9 595.0,347.3 596.8,348.9 598.5,347.3" fill="none" stroke="#e08868" stroke-width="1"/><polyline points="607.5,347.3 609.2,348.9 611.0,347.3 612.8,348.9 614.5,347.3 616.2,348.9 618.0,347.3 619.8,348.9 621.5,347.3 623.2,348.9 625.0,347.3 626.8,348.9 628.5,347.3 630.2,348.9 632.0,347.3 633.8,348.9 635.5,347.3 637.2,348.9 639.0,347.3 640.8,348.9 642.5,347.3 644.2,348.9" fill="none" stroke="#e08868" stroke-width="1"/><polyline points="120.0,395.1 121.8,396.7 123.5,395.1 125.2,396.7 127.0,395.1 128.8,396.7 130.5,395.1 132.2,396.7 134.0,395.1 135.8,396.7 137.5,395.1 139.2,396.7 141.0,395.1 142.8,396.7 144.5,395.1 146.2,396.7 148.0,395.1 149.8,396.7" fill="none" stroke="#e08868" stroke-width="1"/><polyline points="157.5,395.1 159.2,396.7 161.0,395.1 162.8,396.7 164.5,395.1 166.2,396.7 168.0,395.1 169.8,396.7 171.5,395.1" fill="none" stroke="#e08868" stroke-width="1"/><polyline points="180.0,395.1 181.8,396.7 183.5,395.1 185.2,396.7 187.0,395.1 188.8,396.7 190.5,395.1 192.2,396.7 194.0,395.1 195.8,396.7 197.5,395.1 199.2,396.7 201.0,395.1 202.8,396.7 204.5,395.1 206.2,396.7 208.0,395.1 209.8,396.7 211.5,395.1 213.2,396.7 215.0,395.1 216.8,396.7 218.5,395.1 220.2,396.7 222.0,395.1 223.8,396.7 225.5,395.1 227.2,396.7 229.0,395.1 230.8,396.7 232.5,395.1 234.2,396.7 236.0,395.1 237.8,396.7 239.5,395.1" fill="none" stroke="#e08868" stroke-width="1"/><polyline points="127.5,411.0 129.2,412.6 131.0,411.0 132.8,412.6 134.5,411.0 136.2,412.6 138.0,411.0 139.8,412.6 141.5,411.0 143.2,412.6 145.0,411.0 146.8,412.6 148.5,411.0 150.2,412.6 152.0,411.0 153.8,412.6 155.5,411.0 157.2,412.6 159.0,411.0 160.8,412.6 162.5,411.0 164.2,412.6 166.0,411.0 167.8,412.6 169.5,411.0 171.2,412.6" fill="none" stroke="#e08868" stroke-width="1"/><polyline points="180.0,411.0 181.8,412.6 183.5,411.0 185.2,412.6 187.0,411.0 188.8,412.6 190.5,411.0 192.2,412.6 194.0,411.0" fill="none" stroke="#e08868" stroke-width="1"/><polyline points="202.5,411.0 204.2,412.6 206.0,411.0 207.8,412.6 209.5,411.0 211.2,412.6 213.0,411.0 214.8,412.6 216.5,411.0 218.2,412.6 220.0,411.0 221.8,412.6 223.5,411.0 225.2,412.6 227.0,411.0 228.8,412.6 230.5,411.0 232.2,412.6" fill="none" stroke="#e08868" stroke-width="1"/><polyline points="240.0,411.0 241.8,412.6 243.5,411.0 245.2,412.6 247.0,411.0 248.8,412.6 250.5,411.0 252.2,412.6 254.0,411.0 255.8,412.6 257.5,411.0 259.2,412.6 261.0,411.0 262.8,412.6 264.5,411.0 266.2,412.6 268.0,411.0 269.8,412.6" fill="none" stroke="#e08868" stroke-width="1"/><polyline points="277.5,411.0 279.2,412.6 281.0,411.0 282.8,412.6 284.5,411.0 286.2,412.6 288.0,411.0 289.8,412.6 291.5,411.0" fill="none" stroke="#e08868" stroke-width="1"/><polyline points="300.0,411.0 301.8,412.6 303.5,411.0 305.2,412.6 307.0,411.0 308.8,412.6 310.5,411.0 312.2,412.6 314.0,411.0 315.8,412.6 317.5,411.0 319.2,412.6 321.0,411.0 322.8,412.6 324.5,411.0 326.2,412.6 328.0,411.0 329.8,412.6 331.5,411.0 333.2,412.6 335.0,411.0 336.8,412.6 338.5,411.0 340.2,412.6 342.0,411.0 343.8,412.6" fill="none" stroke="#e08868" stroke-width="1"/><polyline points="352.5,411.0 354.2,412.6 356.0,411.0 357.8,412.6 359.5,411.0 361.2,412.6 363.0,411.0 364.8,412.6 366.5,411.0 368.2,412.6 370.0,411.0 371.8,412.6 373.5,411.0 375.2,412.6 377.0,411.0 378.8,412.6 380.5,411.0 382.2,412.6 384.0,411.0 385.8,412.6 387.5,411.0 389.2,412.6" fill="none" stroke="#e08868" stroke-width="1"/><polyline points="397.5,411.0 399.2,412.6 401.0,411.0 402.8,412.6 404.5,411.0 406.2,412.6 408.0,411.0 409.8,412.6 411.5,411.0" fill="none" stroke="#e08868" stroke-width="1"/><polyline points="420.0,411.0 421.8,412.6 423.5,411.0 425.2,412.6 427.0,411.0 428.8,412.6 430.5,411.0 432.2,412.6 434.0,411.0 435.8,412.6 437.5,411.0 439.2,412.6 441.0,411.0 442.8,412.6 444.5,411.0 446.2,412.6 448.0,411.0 449.8,412.6 451.5,411.0 453.2,412.6 455.0,411.0 456.8,412.6 458.5,411.0 460.2,412.6 462.0,411.0 463.8,412.6 465.5,411.0 467.2,412.6 469.0,411.0 470.8,412.6 472.5,411.0 474.2,412.6 476.0,411.0 477.8,412.6 479.5,411.0" fill="none" stroke="#e08868" stroke-width="1"/><polyline points="487.5,411.0 489.2,412.6 491.0,411.0 492.8,412.6 494.5,411.0 496.2,412.6 498.0,411.0 499.8,412.6 501.5,411.0 503.2,412.6 505.0,411.0 506.8,412.6 508.5,411.0 510.2,412.6 512.0,411.0 513.8,412.6 515.5,411.0 517.2,412.6 519.0,411.0 520.8,412.6 522.5,411.0 524.2,412.6 526.0,411.0 527.8,412.6 529.5,411.0 531.2,412.6 533.0,411.0 534.8,412.6 536.5,411.0 538.2,412.6 540.0,411.0" fill="none" stroke="#e08868" stroke-width="1"/></svg>
</div>
<div class="ln" style="top:174px">1
2
3
4
5
6
7
8
9
10
11
12
13
14
15
16
17
18
19
20
21
22
23
24
25
26
27
28
29</div>
<svg style="left:405px;top:190.64px" width="10" height="10"><circle cx="5" cy="5" r="4.3" fill="#f4f6f8" stroke="#9aa4ae" stroke-width="0.9"/><path d="M2.8 5H7.2" stroke="#6a7480" stroke-width="1"/></svg>
<svg style="left:405px;top:206.57px" width="10" height="10"><circle cx="5" cy="5" r="4.3" fill="#f4f6f8" stroke="#9aa4ae" stroke-width="0.9"/><path d="M2.8 5H7.2" stroke="#6a7480" stroke-width="1"/></svg>
<svg style="left:405px;top:270.32px" width="10" height="10"><circle cx="5" cy="5" r="4.3" fill="#f4f6f8" stroke="#9aa4ae" stroke-width="0.9"/><path d="M2.8 5H7.2" stroke="#6a7480" stroke-width="1"/></svg>
<svg style="left:405px;top:286.26px" width="10" height="10"><circle cx="5" cy="5" r="4.3" fill="#f4f6f8" stroke="#9aa4ae" stroke-width="0.9"/><path d="M2.8 5H7.2" stroke="#6a7480" stroke-width="1"/></svg>
<svg style="left:405px;top:302.20px" width="10" height="10"><circle cx="5" cy="5" r="4.3" fill="#f4f6f8" stroke="#9aa4ae" stroke-width="0.9"/><path d="M2.8 5H7.2" stroke="#6a7480" stroke-width="1"/></svg>
<svg style="left:405px;top:350.01px" width="10" height="10"><circle cx="5" cy="5" r="4.3" fill="#f4f6f8" stroke="#9aa4ae" stroke-width="0.9"/><path d="M2.8 5H7.2" stroke="#6a7480" stroke-width="1"/></svg>
<svg style="left:405px;top:413.76px" width="10" height="10"><circle cx="5" cy="5" r="4.3" fill="#f4f6f8" stroke="#9aa4ae" stroke-width="0.9"/><path d="M2.8 5H7.2" stroke="#6a7480" stroke-width="1"/></svg>
<svg style="left:405px;top:429.70px" width="10" height="10"><circle cx="5" cy="5" r="4.3" fill="#f4f6f8" stroke="#9aa4ae" stroke-width="0.9"/><path d="M2.8 5H7.2" stroke="#6a7480" stroke-width="1"/></svg>
<svg style="left:405px;top:477.51px" width="10" height="10"><circle cx="5" cy="5" r="4.3" fill="#f4f6f8" stroke="#9aa4ae" stroke-width="0.9"/><path d="M2.8 5H7.2" stroke="#6a7480" stroke-width="1"/></svg>
<svg style="left:405px;top:541.26px" width="10" height="10"><circle cx="5" cy="5" r="4.3" fill="#f4f6f8" stroke="#9aa4ae" stroke-width="0.9"/><path d="M2.8 5H7.2" stroke="#6a7480" stroke-width="1"/></svg>
<div class="a" style="left:807px;top:316px;width:2px;height:16px;background:#000"></div>
<div class="a" style="left:739px;top:318px;width:8px;height:13px;border:1px solid #b0b0b0"></div>
<svg style="left:806px;top:302px" width="10" height="20"><path d="M1 1H9V3H6V16H9V18H1V16H4V3H1Z" fill="#e8e8e8" stroke="#111" stroke-width="1"/></svg>
<div class="a" style="left:166px;top:261px;width:189px;height:21px;background:linear-gradient(#e4e4e1,#dcdcd9)"></div>
<div class="a" style="left:163px;top:196px;width:192px;height:454px;overflow:hidden">
<svg style="left:13px;top:7px" width="9" height="6" viewBox="0 0 9 6"><path d="M0.3 0.5H8.5L4.4 5.6Z" fill="#505050"/></svg>
<svg style="left:25px;top:5px" width="15" height="12" viewBox="0 0 15 12"><path d="M0.5 2.5V10.5H11.5L13.5 5.5H3.5L1.5 10" fill="none"/><path d="M0.8 10.6V2.2Q0.8 1.5 1.5 1.5H4.5L5.5 2.5H10.5Q11.2 2.5 11.2 3.2V5.2H3.4L0.8 10.6Z" fill="#f3dca0" stroke="#b8973c" stroke-width="0.9"/><path d="M0.8 10.6L3.3 5.3H13.7L11.2 10.6Z" fill="#fbeab8" stroke="#b8973c" stroke-width="0.9" stroke-linejoin="round"/></svg>
<div class="tr" style="left:43.5px;top:1.5px">WebContent</div>
<svg style="left:24px;top:28px" width="9" height="6" viewBox="0 0 9 6"><path d="M0.3 0.5H8.5L4.4 5.6Z" fill="#505050"/></svg>
<svg style="left:36px;top:27px" width="15" height="12" viewBox="0 0 15 12"><path d="M0.5 2.5V10.5H11.5L13.5 5.5H3.5L1.5 10" fill="none"/><path d="M0.8 10.6V2.2Q0.8 1.5 1.5 1.5H4.5L5.5 2.5H10.5Q11.2 2.5 11.2 3.2V5.2H3.4L0.8 10.6Z" fill="#f3dca0" stroke="#b8973c" stroke-width="0.9"/><path d="M0.8 10.6L3.3 5.3H13.7L11.2 10.6Z" fill="#fbeab8" stroke="#b8973c" stroke-width="0.9" stroke-linejoin="round"/></svg>
<div class="tr" style="left:54.1px;top:23.1px">lib</div>
<svg style="left:35px;top:49px" width="6" height="8" viewBox="0 0 6 8"><path d="M0.3 0.3V7.7L5.3 4Z" fill="#555"/></svg>
<svg style="left:48px;top:48px" width="11" height="13" viewBox="0 0 11 13"><path d="M0.5 0.5H7L10.5 4V12.5H0.5Z" fill="#fbfbf6" stroke="#8c8570" stroke-width="0.9"/><path d="M7 0.5V4H10.5Z" fill="#f0e4a8" stroke="#a89860" stroke-width="0.6"/><path d="M4.2 3V7.6Q4.2 8.8 2.6 8.6" fill="none" stroke="#2c5c9c" stroke-width="1.3"/><path d="M8.2 6.2Q6.2 5.8 6.2 7.3Q6.2 8.4 7.4 8.6Q8.6 8.8 8.6 9.9Q8.6 11.2 6.4 10.8" fill="none" stroke="#2c5c9c" stroke-width="1.2"/></svg>
<div class="tr" style="left:64.7px;top:44.6px">jquery-2.1.3.js</div>
<svg style="left:35px;top:71px" width="6" height="8" viewBox="0 0 6 8"><path d="M0.3 0.3V7.7L5.3 4Z" fill="#555"/></svg>
<svg style="left:48px;top:69px" width="11" height="13" viewBox="0 0 11 13"><path d="M0.5 0.5H7L10.5 4V12.5H0.5Z" fill="#fbfbf6" stroke="#8c8570" stroke-width="0.9"/><path d="M7 0.5V4H10.5Z" fill="#f0e4a8" stroke="#a89860" stroke-width="0.6"/><path d="M4.2 3V7.6Q4.2 8.8 2.6 8.6" fill="none" stroke="#2c5c9c" stroke-width="1.3"/><path d="M8.2 6.2Q6.2 5.8 6.2 7.3Q6.2 8.4 7.4 8.6Q8.6 8.8 8.6 9.9Q8.6 11.2 6.4 10.8" fill="none" stroke="#2c5c9c" stroke-width="1.2"/></svg>
<div class="tr" style="left:64.7px;top:66.2px">jquery-2.1.3.min.js</div>
<svg style="left:35px;top:92px" width="6" height="8" viewBox="0 0 6 8"><path d="M0.3 0.3V7.7L5.3 4Z" fill="#555"/></svg>
<svg style="left:48px;top:91px" width="11" height="13" viewBox="0 0 11 13"><path d="M0.5 0.5H7L10.5 4V12.5H0.5Z" fill="#fbfbf6" stroke="#8c8570" stroke-width="0.9"/><path d="M7 0.5V4H10.5Z" fill="#f0e4a8" stroke="#a89860" stroke-width="0.6"/><path d="M4.2 3V7.6Q4.2 8.8 2.6 8.6" fill="none" stroke="#2c5c9c" stroke-width="1.3"/><path d="M8.2 6.2Q6.2 5.8 6.2 7.3Q6.2 8.4 7.4 8.6Q8.6 8.8 8.6 9.9Q8.6 11.2 6.4 10.8" fill="none" stroke="#2c5c9c" stroke-width="1.2"/></svg>
<div class="tr" style="left:64.7px;top:87.7px">jquery.cookie.js</div>
<svg style="left:24px;top:114px" width="6" height="8" viewBox="0 0 6 8"><path d="M0.3 0.3V7.7L5.3 4Z" fill="#555"/></svg>
<svg style="left:36px;top:113px" width="15" height="12" viewBox="0 0 15 12"><path d="M0.5 2.5V10.5H11.5L13.5 5.5H3.5L1.5 10" fill="none"/><path d="M0.8 10.6V2.2Q0.8 1.5 1.5 1.5H4.5L5.5 2.5H10.5Q11.2 2.5 11.2 3.2V5.2H3.4L0.8 10.6Z" fill="#f3dca0" stroke="#b8973c" stroke-width="0.9"/><path d="M0.8 10.6L3.3 5.3H13.7L11.2 10.6Z" fill="#fbeab8" stroke="#b8973c" stroke-width="0.9" stroke-linejoin="round"/></svg>
<div class="tr" style="left:54.1px;top:109.2px">META-INF</div>
<svg style="left:24px;top:135px" width="6" height="8" viewBox="0 0 6 8"><path d="M0.3 0.3V7.7L5.3 4Z" fill="#555"/></svg>
<svg style="left:36px;top:134px" width="15" height="12" viewBox="0 0 15 12"><path d="M0.5 2.5V10.5H11.5L13.5 5.5H3.5L1.5 10" fill="none"/><path d="M0.8 10.6V2.2Q0.8 1.5 1.5 1.5H4.5L5.5 2.5H10.5Q11.2 2.5 11.2 3.2V5.2H3.4L0.8 10.6Z" fill="#f3dca0" stroke="#b8973c" stroke-width="0.9"/><path d="M0.8 10.6L3.3 5.3H13.7L11.2 10.6Z" fill="#fbeab8" stroke="#b8973c" stroke-width="0.9" stroke-linejoin="round"/></svg>
<div class="tr" style="left:54.1px;top:130.8px">WEB-INF</div>
<svg style="left:38px;top:156px" width="11" height="13" viewBox="0 0 11 13"><path d="M0.5 0.5H7.5L10.5 3.5V12.5H0.5Z" fill="#fbfbf4" stroke="#8c8570" stroke-width="0.9"/><path d="M7.5 0.5V3.5H10.5" fill="none" stroke="#8c8570" stroke-width="0.8"/><path d="M2.5 4.5H6M2.5 6.5H8.5M2.5 8.5H8.5M2.5 10.5H7" stroke="#6a9ab0" stroke-width="0.9"/><rect x="2.3" y="5.8" width="2.5" height="1.4" fill="#c05080"/><rect x="5" y="8" width="3.5" height="3" fill="#70b0a0" opacity="0.7"/></svg>
<div class="tr" style="left:54.1px;top:152.3px">index.html</div>
<svg style="left:38px;top:177px" width="11" height="13" viewBox="0 0 11 13"><path d="M0.5 0.5H7.5L10.5 3.5V12.5H0.5Z" fill="#fbfbf4" stroke="#8c8570" stroke-width="0.9"/><path d="M7.5 0.5V3.5H10.5" fill="none" stroke="#8c8570" stroke-width="0.8"/><path d="M2.5 4.5H6M2.5 6.5H8.5M2.5 8.5H8.5M2.5 10.5H7" stroke="#6a9ab0" stroke-width="0.9"/><rect x="2.3" y="5.8" width="2.5" height="1.4" fill="#c05080"/><rect x="5" y="8" width="3.5" height="3" fill="#70b0a0" opacity="0.7"/></svg>
<div class="tr" style="left:54.1px;top:173.9px">index2.html</div>
<svg style="left:2px;top:201px" width="9" height="6" viewBox="0 0 9 6"><path d="M0.3 0.5H8.5L4.4 5.6Z" fill="#505050"/></svg>
<svg style="left:14px;top:198px" width="16" height="14" viewBox="0 0 16 14"><circle cx="5" cy="5" r="4.2" fill="#7fb8d0" stroke="#4a7a90" stroke-width="0.8"/><path d="M2 4Q4 2 6 4T8 6" stroke="#6aaa50" stroke-width="1.5" fill="none"/><path d="M1 13L3.5 8H15L12.5 13Z" fill="#c8dcf0" stroke="#5078a8" stroke-width="0.9"/><path d="M11 1.5V6Q11 7.5 9.5 7.5" stroke="#3d5a90" stroke-width="1.2" fill="none"/><path d="M13.5 1V7" stroke="#3d5a90" stroke-width="0.9"/></svg>
<div class="tr" style="left:32.9px;top:195.4px">navegacionJS</div>
<svg style="left:14px;top:222px" width="6" height="8" viewBox="0 0 6 8"><path d="M0.3 0.3V7.7L5.3 4Z" fill="#555"/></svg>
<svg style="left:24px;top:220px" width="15" height="14" viewBox="0 0 15 14"><circle cx="10" cy="5" r="4" fill="#8cc0a0" stroke="#4a8070" stroke-width="0.8"/><path d="M1 12.5L6.5 3L12 12.5Z" fill="#a8c8f0" stroke="#3050a0" stroke-width="1"/><path d="M1 12.5H12" stroke="#203070" stroke-width="1.4"/></svg>
<div class="tr" style="left:43.5px;top:217.0px;letter-spacing:-0.45px">JAX-WS Web Services</div>
<svg style="left:14px;top:243px" width="6" height="8" viewBox="0 0 6 8"><path d="M0.3 0.3V7.7L5.3 4Z" fill="#555"/></svg>
<svg style="left:24px;top:241px" width="15" height="14" viewBox="0 0 15 14"><circle cx="4.5" cy="4.5" r="4" fill="#8cc0a0" stroke="#4a8070" stroke-width="0.8"/><rect x="3.5" y="5.5" width="11" height="8" fill="#f4f4f0" stroke="#404040" stroke-width="1"/><path d="M5.5 8V11.5M8 8H10V11.5M12 8V11.5" stroke="#303030" stroke-width="1"/></svg>
<div class="tr" style="left:43.5px;top:238.6px">Deployment Descriptor: navegacionJS</div>
<svg style="left:14px;top:265px" width="6" height="8" viewBox="0 0 6 8"><path d="M0.3 0.3V7.7L5.3 4Z" fill="#555"/></svg>
<svg style="left:24px;top:263px" width="15" height="14" viewBox="0 0 15 14"><circle cx="4" cy="4" r="3.5" fill="#8cc0a0" stroke="#4a8070" stroke-width="0.8"/><path d="M0.8 13V6.5H6L7 7.5H12V13Z" fill="#f3dca0" stroke="#b8973c" stroke-width="0.9"/><path d="M0.8 13L3 9H14.5L12.5 13Z" fill="#fbeab8" stroke="#b8973c" stroke-width="0.9"/><path d="M7 3H13V8M8.5 3V8M11.5 3V8" stroke="#a06030" stroke-width="1"/></svg>
<div class="tr" style="left:43.5px;top:260.1px">Java Resources</div>
<svg style="left:14px;top:286px" width="6" height="8" viewBox="0 0 6 8"><path d="M0.3 0.3V7.7L5.3 4Z" fill="#555"/></svg>
<svg style="left:24px;top:284px" width="15" height="14" viewBox="0 0 15 14"><rect x="0.5" y="9" width="9" height="4" fill="#3a8a60" stroke="#205040" stroke-width="0.8"/><rect x="1" y="5.5" width="8" height="3.5" fill="#4070b0" stroke="#203a70" stroke-width="0.8"/><path d="M9 13L12 2L14.5 13Z" fill="#f0c040" stroke="#a07010" stroke-width="0.9"/></svg>
<div class="tr" style="left:43.5px;top:281.7px">JavaScript Resources</div>
<svg style="left:14px;top:308px" width="6" height="8" viewBox="0 0 6 8"><path d="M0.3 0.3V7.7L5.3 4Z" fill="#555"/></svg>
<svg style="left:25px;top:307px" width="15" height="12" viewBox="0 0 15 12"><path d="M0.5 2.5V10.5H11.5L13.5 5.5H3.5L1.5 10" fill="none"/><path d="M0.8 10.6V2.2Q0.8 1.5 1.5 1.5H4.5L5.5 2.5H10.5Q11.2 2.5 11.2 3.2V5.2H3.4L0.8 10.6Z" fill="#f3dca0" stroke="#b8973c" stroke-width="0.9"/><path d="M0.8 10.6L3.3 5.3H13.7L11.2 10.6Z" fill="#fbeab8" stroke="#b8973c" stroke-width="0.9" stroke-linejoin="round"/></svg>
<div class="tr" style="left:43.5px;top:303.2px">build</div>
<svg style="left:13px;top:330px" width="9" height="6" viewBox="0 0 9 6"><path d="M0.3 0.5H8.5L4.4 5.6Z" fill="#505050"/></svg>
<svg style="left:25px;top:328px" width="15" height="12" viewBox="0 0 15 12"><path d="M0.5 2.5V10.5H11.5L13.5 5.5H3.5L1.5 10" fill="none"/><path d="M0.8 10.6V2.2Q0.8 1.5 1.5 1.5H4.5L5.5 2.5H10.5Q11.2 2.5 11.2 3.2V5.2H3.4L0.8 10.6Z" fill="#f3dca0" stroke="#b8973c" stroke-width="0.9"/><path d="M0.8 10.6L3.3 5.3H13.7L11.2 10.6Z" fill="#fbeab8" stroke="#b8973c" stroke-width="0.9" stroke-linejoin="round"/></svg>
<div class="tr" style="left:43.5px;top:324.8px">WebContent</div>
<svg style="left:24px;top:351px" width="9" height="6" viewBox="0 0 9 6"><path d="M0.3 0.5H8.5L4.4 5.6Z" fill="#505050"/></svg>
<svg style="left:36px;top:350px" width="15" height="12" viewBox="0 0 15 12"><path d="M0.5 2.5V10.5H11.5L13.5 5.5H3.5L1.5 10" fill="none"/><path d="M0.8 10.6V2.2Q0.8 1.5 1.5 1.5H4.5L5.5 2.5H10.5Q11.2 2.5 11.2 3.2V5.2H3.4L0.8 10.6Z" fill="#f3dca0" stroke="#b8973c" stroke-width="0.9"/><path d="M0.8 10.6L3.3 5.3H13.7L11.2 10.6Z" fill="#fbeab8" stroke="#b8973c" stroke-width="0.9" stroke-linejoin="round"/></svg>
<div class="tr" style="left:54.1px;top:346.3px">lib</div>
<svg style="left:35px;top:372px" width="6" height="8" viewBox="0 0 6 8"><path d="M0.3 0.3V7.7L5.3 4Z" fill="#555"/></svg>
<svg style="left:48px;top:371px" width="11" height="13" viewBox="0 0 11 13"><path d="M0.5 0.5H7L10.5 4V12.5H0.5Z" fill="#fbfbf6" stroke="#8c8570" stroke-width="0.9"/><path d="M7 0.5V4H10.5Z" fill="#f0e4a8" stroke="#a89860" stroke-width="0.6"/><path d="M4.2 3V7.6Q4.2 8.8 2.6 8.6" fill="none" stroke="#2c5c9c" stroke-width="1.3"/><path d="M8.2 6.2Q6.2 5.8 6.2 7.3Q6.2 8.4 7.4 8.6Q8.6 8.8 8.6 9.9Q8.6 11.2 6.4 10.8" fill="none" stroke="#2c5c9c" stroke-width="1.2"/></svg>
<div class="tr" style="left:64.7px;top:367.8px">jquery-2.1.3.min.js</div>
<svg style="left:24px;top:394px" width="6" height="8" viewBox="0 0 6 8"><path d="M0.3 0.3V7.7L5.3 4Z" fill="#555"/></svg>
<svg style="left:36px;top:393px" width="15" height="12" viewBox="0 0 15 12"><path d="M0.5 2.5V10.5H11.5L13.5 5.5H3.5L1.5 10" fill="none"/><path d="M0.8 10.6V2.2Q0.8 1.5 1.5 1.5H4.5L5.5 2.5H10.5Q11.2 2.5 11.2 3.2V5.2H3.4L0.8 10.6Z" fill="#f3dca0" stroke="#b8973c" stroke-width="0.9"/><path d="M0.8 10.6L3.3 5.3H13.7L11.2 10.6Z" fill="#fbeab8" stroke="#b8973c" stroke-width="0.9" stroke-linejoin="round"/></svg>
<div class="tr" style="left:54.1px;top:389.4px">META-INF</div>
<svg style="left:24px;top:415px" width="6" height="8" viewBox="0 0 6 8"><path d="M0.3 0.3V7.7L5.3 4Z" fill="#555"/></svg>
<svg style="left:36px;top:415px" width="15" height="12" viewBox="0 0 15 12"><path d="M0.5 2.5V10.5H11.5L13.5 5.5H3.5L1.5 10" fill="none"/><path d="M0.8 10.6V2.2Q0.8 1.5 1.5 1.5H4.5L5.5 2.5H10.5Q11.2 2.5 11.2 3.2V5.2H3.4L0.8 10.6Z" fill="#f3dca0" stroke="#b8973c" stroke-width="0.9"/><path d="M0.8 10.6L3.3 5.3H13.7L11.2 10.6Z" fill="#fbeab8" stroke="#b8973c" stroke-width="0.9" stroke-linejoin="round"/></svg>
<div class="tr" style="left:54.1px;top:410.9px">WEB-INF</div>
<svg style="left:38px;top:436px" width="11" height="13" viewBox="0 0 11 13"><path d="M0.5 0.5H7.5L10.5 3.5V12.5H0.5Z" fill="#fbfbf4" stroke="#8c8570" stroke-width="0.9"/><path d="M7.5 0.5V3.5H10.5" fill="none" stroke="#8c8570" stroke-width="0.8"/><path d="M2.5 4.5H6M2.5 6.5H8.5M2.5 8.5H8.5M2.5 10.5H7" stroke="#6a9ab0" stroke-width="0.9"/><rect x="2.3" y="5.8" width="2.5" height="1.4" fill="#c05080"/><rect x="5" y="8" width="3.5" height="3" fill="#70b0a0" opacity="0.7"/></svg>
<div class="tr" style="left:54.1px;top:432.5px">index.html</div>
</div>
<div class="a" style="left:1083px;top:141px;width:37px;height:65px;background:#e9e8e6;border:1px solid #d2d1ce;border-radius:5px"></div>
<div class="a" style="left:1083px;top:209px;width:37px;height:93px;background:#e9e8e6;border:1px solid #d2d1ce;border-radius:5px"></div>
<div class="a" style="left:1083px;top:304px;width:37px;height:222px;background:#e9e8e6;border:1px solid #d2d1ce;border-radius:5px"></div>
<svg style="left:167px;top:148px" width="16" height="15" viewBox="0 0 16 15"><path d="M1.5 0.5H6.5L9 3V11H1.5Z" fill="#f4f4f2" stroke="#9a9a96" stroke-width="0.9"/><path d="M3 3.5H5.5M3 5.5H6" stroke="#8090b0" stroke-width="0.8"/><path d="M5.5 13.5V7.5Q5.5 6.5 6.5 6.5H9L10 7.5H14Q15 7.5 15 8.5V13.5Z" fill="#f2d68a" stroke="#b8963a" stroke-width="0.9"/><path d="M6 9.5H14.5" stroke="#fbeebb" stroke-width="1"/></svg>
<svg style="left:288px;top:151px" width="10" height="10" viewBox="0 0 10 10"><path d="M1.5 1.5L8.5 8.5M8.5 1.5L1.5 8.5" stroke="#555" stroke-width="2.8" stroke-linecap="square"/><path d="M1.5 1.5L8.5 8.5M8.5 1.5L1.5 8.5" stroke="#fafafa" stroke-width="1.1" stroke-linecap="square"/></svg>
<svg style="left:320px;top:151px" width="11" height="5" viewBox="0 0 11 5"><rect x="0.6" y="0.6" width="9.8" height="3.6" rx="1" fill="#fff" stroke="#222" stroke-width="1.1"/></svg>
<svg style="left:346px;top:151px" width="11" height="10" viewBox="0 0 11 10"><rect x="0.6" y="0.6" width="9.6" height="8.6" fill="#fff" stroke="#222" stroke-width="1.1"/><path d="M0.6 2H10.2" stroke="#222" stroke-width="1.6"/></svg>
<svg style="left:251px;top:181px" width="13" height="12" viewBox="0 0 13 12"><rect x="0.5" y="0.5" width="9" height="8.5" fill="#eef4f6" stroke="#90a8b4" stroke-width="0.9"/><rect x="2.8" y="2.8" width="9.5" height="8.7" fill="#e4f0f6" stroke="#7a94a4" stroke-width="0.9"/><path d="M4.8 7.2H10.4" stroke="#5a7080" stroke-width="1.6"/></svg>
<svg style="left:275px;top:179px" width="16" height="15" viewBox="0 0 16 15"><path d="M5 0.8L0.8 4.2L5 7.6V5.6H11V2.8H5Z" fill="#f6e890" stroke="#b09a30" stroke-width="0.9"/><path d="M11 6.4L15.2 9.8L11 13.2V11.2H5V8.4H11Z" fill="#f6e890" stroke="#b09a30" stroke-width="0.9"/></svg>
<div class="a" style="left:301px;top:178px;width:1px;height:14px;background:#d8d8d6"></div>
<svg style="left:314px;top:180px" width="12" height="12" viewBox="0 0 12 12"><circle cx="4" cy="4" r="3" fill="#dadada"/><circle cx="8" cy="6" r="3" fill="#e2e2e2"/><circle cx="5" cy="8.5" r="3" fill="#d6d6d6"/></svg>
<svg style="left:349px;top:182px" width="10" height="6" viewBox="0 0 10 6"><path d="M0.7 0.7H9.3L5 5.3Z" fill="#fff" stroke="#333" stroke-width="0.9" stroke-linejoin="round"/></svg>
<div class="a" style="left:357px;top:201px;width:13px;height:448px;background:linear-gradient(#ecebe9 0,#ecebe9 12px,#dddcd8 12px,#dddcd8 434px,#ecebe9 434px);border:1px solid #cfcecb;border-radius:6px"></div>
<div class="a" style="left:358px;top:212px;width:11px;height:133px;background:#dddcd8;border-radius:6px 6px 0 0"></div>
<div class="a" style="left:358px;top:339px;width:11px;height:282px;background:linear-gradient(90deg,#f6f6f4,#e8e8e6);border:1px solid #c9c8c5;border-radius:6px"></div>
<svg style="left:360px;top:204px" width="7" height="4" viewBox="0 0 7 4"><path d="M0.5 3.5L3.5 0.5L6.5 3.5Z" fill="#888"/></svg>
<svg style="left:360px;top:640px" width="7" height="4" viewBox="0 0 7 4"><path d="M0.5 0.5L3.5 3.5L6.5 0.5Z" fill="#888"/></svg>
<div class="a" style="left:166px;top:652px;width:189px;height:12px;background:linear-gradient(90deg,#ecebe9 0,#ecebe9 14px,#dddcd8 14px,#dddcd8 175px,#ecebe9 175px);border:1px solid #cfcecb;border-radius:6px"></div>
<div class="a" style="left:178px;top:653px;width:102px;height:10px;background:linear-gradient(#f8f8f6,#e8e8e6);border:1px solid #c9c8c5;border-radius:6px"></div>
<svg style="left:170px;top:655px" width="4" height="7" viewBox="0 0 4 7"><path d="M3.5 0.5L0.5 3.5L3.5 6.5Z" fill="#888"/></svg>
<svg style="left:347px;top:655px" width="4" height="7" viewBox="0 0 4 7"><path d="M0.5 0.5L3.5 3.5L0.5 6.5Z" fill="#888"/></svg>
<div class="a" style="left:227px;top:656px;width:6px;height:3px;border-left:1px solid #aaa;border-right:1px solid #aaa"></div>
<div class="a" style="left:229px;top:656px;width:2px;height:3px;border-left:1px solid #aaa"></div>
<svg style="left:384px;top:149px" width="11" height="13" viewBox="0 0 11 13"><path d="M0.5 0.5H7L10.5 4V12.5H0.5Z" fill="#fdfdf6" stroke="#8a8470" stroke-width="0.9"/><path d="M7 0.5V4H10.5Z" fill="#f0e8b0" stroke="#8a8470" stroke-width="0.6"/><rect x="2" y="4" width="3.5" height="1" fill="#c87090"/><path d="M2 6.2H8M2 8.2H8" stroke="#a8b8d0" stroke-width="0.9"/><rect x="4" y="6.5" width="4.5" height="4.5" fill="#80c0b0" opacity="0.7"/></svg>
<svg style="left:481px;top:151px" width="10" height="10" viewBox="0 0 10 10"><path d="M1.5 1.5L8.5 8.5M8.5 1.5L1.5 8.5" stroke="#555" stroke-width="2.8" stroke-linecap="square"/><path d="M1.5 1.5L8.5 8.5M8.5 1.5L1.5 8.5" stroke="#fafafa" stroke-width="1.1" stroke-linecap="square"/></svg>
<svg style="left:1026px;top:151px" width="11" height="5" viewBox="0 0 11 5"><rect x="0.6" y="0.6" width="9.8" height="3.6" rx="1" fill="#fff" stroke="#222" stroke-width="1.1"/></svg>
<svg style="left:1053px;top:151px" width="11" height="10" viewBox="0 0 11 10"><rect x="0.6" y="0.6" width="9.6" height="8.6" fill="#fff" stroke="#222" stroke-width="1.1"/><path d="M0.6 2H10.2" stroke="#222" stroke-width="1.6"/></svg>
<div class="a" style="left:1052px;top:173px;width:13px;height:476px;background:linear-gradient(#ecebe9 0,#ecebe9 12px,#dddcd8 12px,#dddcd8 462px,#ecebe9 462px);border:1px solid #cfcecb;border-radius:6px"></div>
<div class="a" style="left:1053px;top:185px;width:11px;height:449px;background:linear-gradient(90deg,#f6f6f4,#e8e8e6);border:1px solid #c9c8c5;border-radius:6px"></div>
<svg style="left:1055px;top:176px" width="7" height="4" viewBox="0 0 7 4"><path d="M0.5 3.5L3.5 0.5L6.5 3.5Z" fill="#888"/></svg>
<svg style="left:1055px;top:640px" width="7" height="4" viewBox="0 0 7 4"><path d="M0.5 0.5L3.5 3.5L6.5 0.5Z" fill="#888"/></svg>
<div class="a" style="left:415px;top:652px;width:635px;height:12px;background:linear-gradient(90deg,#ecebe9 0,#ecebe9 14px,#dddcd8 14px,#dddcd8 621px,#ecebe9 621px);border:1px solid #cfcecb;border-radius:6px"></div>
<div class="a" style="left:427px;top:653px;width:374px;height:10px;background:linear-gradient(#f8f8f6,#e8e8e6);border:1px solid #c9c8c5;border-radius:6px"></div>
<svg style="left:419px;top:655px" width="4" height="7" viewBox="0 0 4 7"><path d="M3.5 0.5L0.5 3.5L3.5 6.5Z" fill="#888"/></svg>
<svg style="left:1042px;top:655px" width="4" height="7" viewBox="0 0 4 7"><path d="M0.5 0.5L3.5 3.5L0.5 6.5Z" fill="#888"/></svg>
<div class="a" style="left:612px;top:656px;width:6px;height:3px;border-left:1px solid #aaa;border-right:1px solid #aaa"></div>
<div class="a" style="left:614px;top:656px;width:2px;height:3px;border-left:1px solid #aaa"></div>
<div class="a" style="left:1093px;top:147px;width:3px;height:1.4px;background:#a8a8a6"></div>
<div class="a" style="left:1098px;top:147px;width:3px;height:1.4px;background:#a8a8a6"></div>
<div class="a" style="left:1103px;top:147px;width:3px;height:1.4px;background:#a8a8a6"></div>
<div class="a" style="left:1108px;top:147px;width:3px;height:1.4px;background:#a8a8a6"></div>
<svg style="left:1096px;top:160px" width="9" height="7" viewBox="0 0 9 7"><rect x="3.5" y="0.5" width="5" height="3.5" fill="#fff" stroke="#333" stroke-width="1"/><rect x="0.5" y="3" width="5" height="3.5" fill="#fff" stroke="#333" stroke-width="1"/></svg>
<svg style="left:1094px;top:182px" width="15" height="15" viewBox="0 0 15 15"><circle cx="7.5" cy="7.5" r="6.8" fill="#f0f0ee" stroke="#707070" stroke-width="0.9"/><circle cx="8.5" cy="4.5" r="2.3" fill="#40a0e0"/><circle cx="4.8" cy="9" r="2.3" fill="#e0c040"/><circle cx="9.8" cy="10" r="2.5" fill="#40b040"/></svg>
<div class="a" style="left:1093px;top:215px;width:3px;height:1.4px;background:#a8a8a6"></div>
<div class="a" style="left:1098px;top:215px;width:3px;height:1.4px;background:#a8a8a6"></div>
<div class="a" style="left:1103px;top:215px;width:3px;height:1.4px;background:#a8a8a6"></div>
<div class="a" style="left:1108px;top:215px;width:3px;height:1.4px;background:#a8a8a6"></div>
<svg style="left:1096px;top:228px" width="9" height="7" viewBox="0 0 9 7"><rect x="3.5" y="0.5" width="5" height="3.5" fill="#fff" stroke="#333" stroke-width="1"/><rect x="0.5" y="3" width="5" height="3.5" fill="#fff" stroke="#333" stroke-width="1"/></svg>
<svg style="left:1094px;top:250px" width="15" height="16" viewBox="0 0 15 16"><rect x="0.5" y="1.5" width="5" height="5" fill="#c8e4f8" stroke="#3a88c8" stroke-width="1"/><rect x="0.5" y="9.5" width="5" height="5" fill="#c8e4f8" stroke="#3a88c8" stroke-width="1"/><path d="M7 3.5H14M9 8H12M7 12H14" stroke="#4a80b0" stroke-width="1.1"/></svg>
<svg style="left:1095px;top:276px" width="13" height="16" viewBox="0 0 13 16"><path d="M0.5 0.5H12.5V13.5L10 15.5H3L0.5 13.5Z" fill="#e4e6ec" stroke="#6a6c80" stroke-width="0.9"/><path d="M3 3.5H10M3 6H10M3 8.5H10M3 11H10" stroke="#505468" stroke-width="1"/></svg>
<div class="a" style="left:1093px;top:309px;width:3px;height:1.4px;background:#a8a8a6"></div>
<div class="a" style="left:1098px;top:309px;width:3px;height:1.4px;background:#a8a8a6"></div>
<div class="a" style="left:1103px;top:309px;width:3px;height:1.4px;background:#a8a8a6"></div>
<div class="a" style="left:1108px;top:309px;width:3px;height:1.4px;background:#a8a8a6"></div>
<svg style="left:1096px;top:322px" width="9" height="7" viewBox="0 0 9 7"><rect x="3.5" y="0.5" width="5" height="3.5" fill="#fff" stroke="#333" stroke-width="1"/><rect x="0.5" y="3" width="5" height="3.5" fill="#fff" stroke="#333" stroke-width="1"/></svg>
<svg style="left:1094px;top:344px" width="15" height="16" viewBox="0 0 15 16"><path d="M1 1H10L14 4V15H1Z" fill="#f8f0d8" stroke="#8a8070" stroke-width="0.9"/><circle cx="5.5" cy="6" r="2.5" fill="#d02040"/><circle cx="5.5" cy="11.5" r="2.5" fill="#f0b020"/><path d="M9 5V14" stroke="#a09070" stroke-width="1"/></svg>
<svg style="left:1093px;top:370px" width="16" height="16" viewBox="0 0 16 16"><rect x="0.5" y="1.5" width="15" height="13" fill="#f4f8fc" stroke="#3a6a98" stroke-width="1"/><rect x="0.5" y="1.5" width="15" height="3" fill="#90b8e0" stroke="#3a6a98" stroke-width="1"/><path d="M0.5 8H15.5M0.5 11H15.5" stroke="#a0b8d0" stroke-width="0.8"/></svg>
<svg style="left:1093px;top:396px" width="16" height="16" viewBox="0 0 16 16"><path d="M3 1V15M8 1V15M13 1V15" stroke="#308030" stroke-width="1.4"/><rect x="1" y="8" width="4" height="3" fill="#40a040" stroke="#205020" stroke-width="0.7"/><rect x="6" y="4" width="4" height="3" fill="#3070c0" stroke="#203060" stroke-width="0.7"/><rect x="11" y="10" width="4" height="3" fill="#40a040" stroke="#205020" stroke-width="0.7"/></svg>
<svg style="left:1092px;top:422px" width="17" height="16" viewBox="0 0 17 16"><path d="M0.5 2L5.5 0.5L11 2L16.5 0.5V14L11 15.5L5.5 14L0.5 15.5Z" fill="#60b040" stroke="#306020" stroke-width="0.9"/><path d="M5.5 0.5V14M11 2V15.5" stroke="#306020" stroke-width="0.8"/><path d="M2 6H5M7 8H10M12 5H15M3 10H5" stroke="#f0e060" stroke-width="1.2"/></svg>
<svg style="left:1094px;top:449px" width="15" height="16" viewBox="0 0 15 16"><path d="M1 1H10L14 5V15H1Z" fill="#f4f8fc" stroke="#4a70a0" stroke-width="0.9"/><path d="M3 6L8 11M3 6H6M3 6V9" stroke="#203a70" stroke-width="1.1"/><rect x="6" y="10" width="7" height="4" fill="#a0c0e0" stroke="#4a70a0" stroke-width="0.7"/></svg>
<svg style="left:1094px;top:475px" width="15" height="15" viewBox="0 0 15 15"><rect x="0.5" y="0.5" width="14" height="11" rx="2" fill="#3a80d0" stroke="#1a4a90" stroke-width="0.9"/><rect x="2.5" y="2.5" width="10" height="6" fill="#e8f4ff"/><path d="M4 4.5H10M4 6.5H8" stroke="#3a80d0" stroke-width="0.8"/><path d="M5 12V14.5H10V12" fill="#6a90c0" stroke="#1a4a90" stroke-width="0.8"/></svg>
<svg style="left:1093px;top:500px" width="17" height="17" viewBox="0 0 17 17"><path d="M4 3H14L15.5 5V16H5L3.5 14V6Z" fill="#f8f4e4" stroke="#8a8070" stroke-width="0.9"/><circle cx="6" cy="6" r="5" fill="#e02828" stroke="#901010" stroke-width="0.8"/><path d="M3.8 3.8L8.2 8.2M8.2 3.8L3.8 8.2" stroke="#fff" stroke-width="1.4"/></svg>
<svg style="left:164px;top:673px" width="13" height="16" viewBox="0 0 13 16"><path d="M0.5 0.5H8.5L12.5 4.5V15.5H0.5Z" fill="#f4f4f0" stroke="#707070" stroke-width="0.9"/><path d="M8.5 0.5V4.5H12.5" fill="none" stroke="#707070" stroke-width="0.8"/><path d="M2.5 6.5H10M2.5 9H10M2.5 11.5H10" stroke="#8aa0c0" stroke-width="1"/></svg>
<div class="a" style="left:819px;top:672.0px;width:1.7px;height:3.4px;background:#9c9b96;border-radius:0.8px"></div>
<div class="a" style="left:819px;top:678.0px;width:1.7px;height:3.4px;background:#9c9b96;border-radius:0.8px"></div>
<div class="a" style="left:819px;top:684.0px;width:1.7px;height:3.4px;background:#9c9b96;border-radius:0.8px"></div>
<div class="a" style="left:819px;top:690.0px;width:1.7px;height:3.4px;background:#9c9b96;border-radius:0.8px"></div>
<div class="t" style="left:182px;top:674px;font-size:14px;letter-spacing:0.7px;color:#3c3c3c">html/body/nav/#text</div>
<div class="t" style="left:507px;top:674px;font-size:14px;letter-spacing:0.5px;color:#3c3c3c">Writable</div>
<div class="t" style="left:619px;top:674px;font-size:14px;letter-spacing:0.15px;color:#3c3c3c">Smart Insert</div>
<div class="t" style="left:724px;top:674px;font-size:14px;letter-spacing:-0.2px;color:#3c3c3c">10 : 53</div>
<div class="a" style="left:500px;top:669px;width:1px;height:24px;background:#d6d6d2"></div>
<div class="a" style="left:611px;top:669px;width:1px;height:24px;background:#d6d6d2"></div>
<div class="a" style="left:717px;top:669px;width:1px;height:24px;background:#d6d6d2"></div>
<div class="a" style="left:160px;top:697px;width:960px;height:23px;background:linear-gradient(#4b4a43,#3a3934)"></div>
<div class="a" style="left:359px;top:697px;width:161px;height:23px;background:linear-gradient(#32312d,#2b2a27)"></div>
<div class="t" style="left:231px;top:702px;font-size:14px;color:#dfdbd2">[eclipse]</div>
<div class="t" style="left:393px;top:702px;font-size:14px;color:#dfdbd2;transform:scaleX(0.915);transform-origin:0 0">Java EE - navega…</div>
<div class="t" style="left:552.5px;top:702px;font-size:14px;color:#dfdbd2">[04-JavaScript]</div>
<div class="t" style="left:715px;top:702px;font-size:14px;color:#dfdbd2">Insert title here -…</div>
<div class="t" style="left:876px;top:702px;font-size:14px;color:#dfdbd2">WebContent</div>
<svg style="left:167px;top:701px" width="15" height="15" viewBox="0 0 15 15"><rect x="0.5" y="1" width="14" height="2.6" fill="#e8e4d8"/><rect x="0.5" y="4.5" width="14" height="10" rx="1" fill="#b040c0"/><rect x="1.5" y="5.5" width="2.2" height="2.4" fill="#e8c8f0"/><rect x="1.5" y="9.5" width="2.2" height="2.4" fill="#e8c8f0"/><circle cx="9" cy="9.5" r="3" fill="#d070e0" opacity="0.6"/></svg>
<div class="a" style="left:187px;top:698px;width:1px;height:22px;background:#33322e"></div>
<svg style="left:208px;top:700px" width="14" height="16" viewBox="0 0 14 16"><rect x="0.5" y="0.5" width="13" height="15" rx="1.5" fill="#8c8a85" stroke="#5a5854" stroke-width="0.8"/><rect x="1.8" y="2" width="10.4" height="5.2" fill="#5a4030"/><rect x="2.5" y="3.6" width="9" height="1.8" fill="#e0a070"/><rect x="1.8" y="8.2" width="10.4" height="6" fill="#9c9a94"/><path d="M5 11.5H9" stroke="#6a6864" stroke-width="1"/></svg>
<svg style="left:530px;top:700px" width="14" height="16" viewBox="0 0 14 16"><rect x="0.5" y="0.5" width="13" height="15" rx="1.5" fill="#8c8a85" stroke="#5a5854" stroke-width="0.8"/><rect x="1.8" y="2" width="10.4" height="5.2" fill="#5a4030"/><rect x="2.5" y="3.6" width="9" height="1.8" fill="#e0a070"/><rect x="1.8" y="8.2" width="10.4" height="6" fill="#9c9a94"/><path d="M5 11.5H9" stroke="#6a6864" stroke-width="1"/></svg>
<svg style="left:854px;top:700px" width="14" height="16" viewBox="0 0 14 16"><rect x="0.5" y="0.5" width="13" height="15" rx="1.5" fill="#8c8a85" stroke="#5a5854" stroke-width="0.8"/><rect x="1.8" y="2" width="10.4" height="5.2" fill="#5a4030"/><rect x="2.5" y="3.6" width="9" height="1.8" fill="#e0a070"/><rect x="1.8" y="8.2" width="10.4" height="6" fill="#9c9a94"/><path d="M5 11.5H9" stroke="#6a6864" stroke-width="1"/></svg>
<svg style="left:367px;top:699px" width="20" height="18" viewBox="0 0 20 18"><rect x="0" y="0" width="20" height="18" fill="#4a4680"/><rect x="8.6" y="0.8" width="2.8" height="3.4" fill="#f4f4f4" transform="rotate(0 10 9)"/><rect x="8.6" y="0.8" width="2.8" height="3.4" fill="#f4f4f4" transform="rotate(45 10 9)"/><rect x="8.6" y="0.8" width="2.8" height="3.4" fill="#f4f4f4" transform="rotate(90 10 9)"/><rect x="8.6" y="0.8" width="2.8" height="3.4" fill="#f4f4f4" transform="rotate(135 10 9)"/><rect x="8.6" y="0.8" width="2.8" height="3.4" fill="#f4f4f4" transform="rotate(180 10 9)"/><rect x="8.6" y="0.8" width="2.8" height="3.4" fill="#f4f4f4" transform="rotate(225 10 9)"/><rect x="8.6" y="0.8" width="2.8" height="3.4" fill="#f4f4f4" transform="rotate(270 10 9)"/><rect x="8.6" y="0.8" width="2.8" height="3.4" fill="#f4f4f4" transform="rotate(315 10 9)"/><circle cx="10" cy="9" r="6.2" fill="#f4f4f4"/><circle cx="10" cy="9" r="4.6" fill="#2c2a60"/><path d="M5.6 8H14.4M5.6 10H14.4" stroke="#f4f4f4" stroke-width="0.8"/></svg>
<svg style="left:692px;top:700px" width="16" height="16" viewBox="0 0 16 16"><circle cx="8" cy="8" r="7.5" fill="#db4437"/><path d="M8 8L1.5 4.2A7.5 7.5 0 0 1 14.5 4.2Z" fill="#db4437"/><path d="M8 8L14.5 4.2A7.5 7.5 0 0 1 8 15.5Z" fill="#f4c20d"/><path d="M8 8L8 15.5A7.5 7.5 0 0 1 1.5 4.2Z" fill="#0f9d58"/><circle cx="8" cy="8" r="3.6" fill="#fff"/><circle cx="8" cy="8" r="2.8" fill="#4285f4"/></svg>
<div class="a" style="left:681px;top:698px;width:1px;height:22px;background:#2a2926"></div>
<div class="a" style="left:842px;top:698px;width:1px;height:22px;background:#2a2926"></div>
<div class="a" style="left:1007px;top:698px;width:28px;height:21px;background:#e89878"></div>
<svg style="left:1011px;top:700px" width="20" height="18" viewBox="0 0 20 18"><rect x="0" y="0" width="20" height="18" fill="#4a4680"/><rect x="8.6" y="0.8" width="2.8" height="3.4" fill="#f4f4f4" transform="rotate(0 10 9)"/><rect x="8.6" y="0.8" width="2.8" height="3.4" fill="#f4f4f4" transform="rotate(45 10 9)"/><rect x="8.6" y="0.8" width="2.8" height="3.4" fill="#f4f4f4" transform="rotate(90 10 9)"/><rect x="8.6" y="0.8" width="2.8" height="3.4" fill="#f4f4f4" transform="rotate(135 10 9)"/><rect x="8.6" y="0.8" width="2.8" height="3.4" fill="#f4f4f4" transform="rotate(180 10 9)"/><rect x="8.6" y="0.8" width="2.8" height="3.4" fill="#f4f4f4" transform="rotate(225 10 9)"/><rect x="8.6" y="0.8" width="2.8" height="3.4" fill="#f4f4f4" transform="rotate(270 10 9)"/><rect x="8.6" y="0.8" width="2.8" height="3.4" fill="#f4f4f4" transform="rotate(315 10 9)"/><circle cx="10" cy="9" r="6.2" fill="#f4f4f4"/><circle cx="10" cy="9" r="4.6" fill="#2c2a60"/><path d="M5.6 8H14.4M5.6 10H14.4" stroke="#f4f4f4" stroke-width="0.8"/></svg>
<div class="a" style="left:1035px;top:698px;width:85px;height:22px;background:#2e2d2a"></div>
<div class="a" style="left:1063px;top:698px;width:1px;height:22px;background:#403f3b"></div>
<div class="a" style="left:1091px;top:698px;width:1px;height:22px;background:#403f3b"></div>
<svg style="left:891px;top:4px" width="21" height="14" viewBox="0 0 21 14"><rect x="0.5" y="1.5" width="13" height="11" rx="2" fill="#c8c4bc"/><path d="M13 5L20 1.5V12.5L13 9Z" fill="#c8c4bc"/><circle cx="7" cy="7" r="3.3" fill="#e03030"/></svg>
<svg style="left:925px;top:3px" width="17" height="17" viewBox="0 0 17 17"><circle cx="8.5" cy="8.5" r="8" fill="#db4437"/><path d="M8.5 8.5L15.4 4.5A8 8 0 0 1 8.5 16.5Z" fill="#f4c20d"/><path d="M8.5 8.5L8.5 16.5A8 8 0 0 1 1.6 4.5Z" fill="#0f9d58"/><circle cx="8.5" cy="8.5" r="3.9" fill="#fff"/><circle cx="8.5" cy="8.5" r="3" fill="#4285f4"/></svg>
<svg style="left:957px;top:4px" width="18" height="14" viewBox="0 0 18 14"><path d="M1 5Q9 -2 17 5" stroke="#8a877f" stroke-width="1.6" fill="none"/><path d="M3.5 8Q9 3 14.5 8" stroke="#d8d4cc" stroke-width="1.6" fill="none"/><path d="M6 10.5Q9 8 12 10.5" stroke="#d8d4cc" stroke-width="1.6" fill="none"/><circle cx="9" cy="12.5" r="1.4" fill="#d8d4cc"/></svg>
<div class="a" style="left:990px;top:3px;width:20px;height:17px;background:#dcd8d0"></div>
<div class="t" style="left:992px;top:4px;font-size:14px;color:#3c3b37;-webkit-text-stroke:0.2px #3c3b37">Es</div>
<svg style="left:1024px;top:5px" width="22" height="12" viewBox="0 0 22 12"><rect x="0.8" y="0.8" width="18" height="10.4" rx="1.5" fill="#8a877e" stroke="#d0ccc4" stroke-width="1.3"/><rect x="19.5" y="3.5" width="2" height="5" fill="#d0ccc4"/><path d="M6.5 3L10.5 5.8L9.6 6.6L13.5 9.2L9 7.6L9.8 6.8Z" fill="#dedad2" stroke="#dedad2" stroke-width="0.5"/></svg>
<svg style="left:1060px;top:3px" width="18" height="16" viewBox="0 0 18 16"><path d="M1 5.5H4L8 2V14L4 10.5H1Z" fill="#d8d4cc"/><path d="M10 5Q12 8 10 11" stroke="#d8d4cc" stroke-width="1.5" fill="none"/><path d="M12.5 3Q15.5 8 12.5 13" stroke="#d8d4cc" stroke-width="1.5" fill="none"/><path d="M15 1Q19 8 15 15" stroke="#8a877f" stroke-width="1.5" fill="none"/></svg>
<svg style="left:1094px;top:1px" width="18" height="20" viewBox="0 0 18 20"><rect x="7.8" y="1.6" width="2.4" height="3" fill="#dcd8d0" transform="rotate(45 9 10)"/><rect x="7.8" y="1.6" width="2.4" height="3" fill="#dcd8d0" transform="rotate(90 9 10)"/><rect x="7.8" y="1.6" width="2.4" height="3" fill="#dcd8d0" transform="rotate(135 9 10)"/><rect x="7.8" y="1.6" width="2.4" height="3" fill="#dcd8d0" transform="rotate(180 9 10)"/><rect x="7.8" y="1.6" width="2.4" height="3" fill="#dcd8d0" transform="rotate(225 9 10)"/><rect x="7.8" y="1.6" width="2.4" height="3" fill="#dcd8d0" transform="rotate(270 9 10)"/><rect x="7.8" y="1.6" width="2.4" height="3" fill="#dcd8d0" transform="rotate(315 9 10)"/><path d="M6.6 5.4A5.1 5.1 0 1 0 11.4 5.4" fill="none" stroke="#dcd8d0" stroke-width="2"/><rect x="8.15" y="1.5" width="1.7" height="7" fill="#dcd8d0"/></svg>
</body></html>
